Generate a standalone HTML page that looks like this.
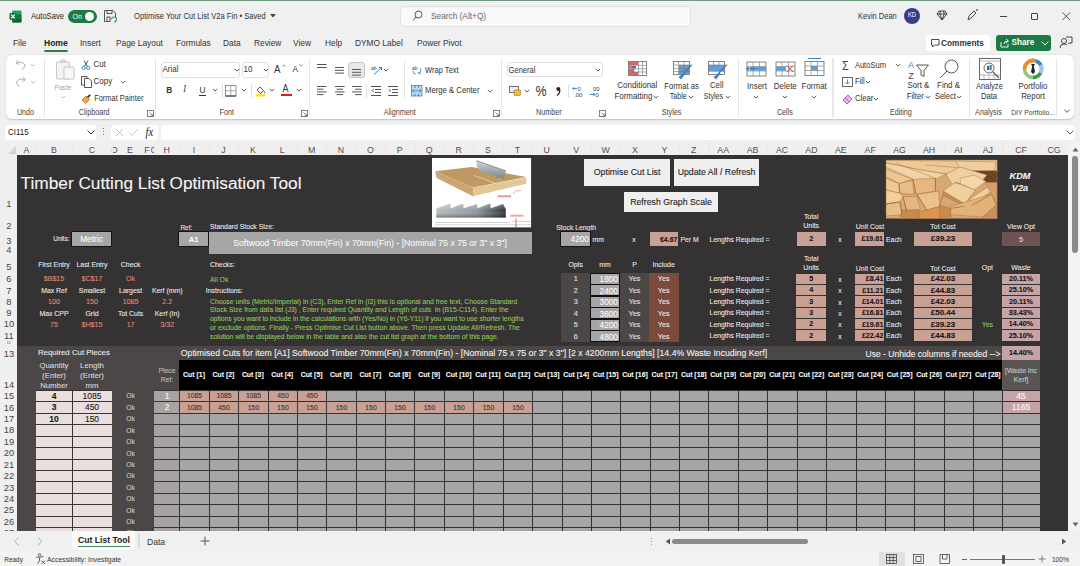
<!DOCTYPE html>
<html><head><meta charset="utf-8"><title>Timber Cutting List</title><style>
*{margin:0;padding:0;box-sizing:border-box}
html,body{width:1080px;height:566px;overflow:hidden;background:#f0f0f0;font-family:"Liberation Sans",sans-serif;color:#222}
.a{position:absolute}
.t{position:absolute;white-space:nowrap}
.s{-webkit-text-stroke:0.1px currentColor}
svg.a{overflow:visible}
</style></head><body>
<div class="a" style="left:0;top:0;width:1080px;height:1px;background:#6f9c80"></div>
<svg class="a" style="left:9px;top:10px" width="13" height="13" viewBox="0 0 13 13"><rect x="3" y="0.5" width="9.5" height="12" rx="1.2" fill="#21a366"/><rect x="3" y="4.5" width="9.5" height="4" fill="#107c41"/><rect x="3" y="8.5" width="9.5" height="4" rx="1" fill="#185c37"/><rect x="0.5" y="3" width="7" height="7" rx="1" fill="#107c41"/><path d="M2.2 4.6 L5.8 8.4 M5.8 4.6 L2.2 8.4" stroke="#fff" stroke-width="1.1"/></svg>
<div class="t" style="left:31.00px;top:9.08px;height:15.20px;line-height:15.20px;font-size:7.6px;color:#222;font-weight:normal;font-style:normal;transform:scaleY(1.12);">AutoSave</div>
<div class="a" style="left:68.00px;top:10.00px;width:29.00px;height:13.00px;background:#1c7a45;border-radius:7px"></div>
<div class="t" style="left:72.50px;top:9.57px;height:14.00px;line-height:14.00px;font-size:7px;color:#fff;font-weight:normal;font-style:normal;transform:scaleY(1.12);">On</div>
<div class="a" style="left:85px;top:12px;width:9px;height:9px;background:#fff;border-radius:50%"></div>
<svg class="a" style="left:103px;top:9px" width="14" height="14" viewBox="0 0 14 14"><path d="M1.5 1.5 H10 L12.5 4 V8 M1.5 1.5 V12.5 H7" fill="none" stroke="#555" stroke-width="1"/><rect x="4" y="1.5" width="5" height="3" fill="none" stroke="#555" stroke-width="1"/><rect x="4" y="8" width="3" height="4.5" fill="none" stroke="#555" stroke-width="1"/><path d="M8.5 10.5 a2.5 2.5 0 1 1 2.5 2.5" fill="none" stroke="#21a366" stroke-width="1.2"/></svg>
<div class="t" style="left:134.00px;top:8.78px;height:15.20px;line-height:15.20px;font-size:7.6px;color:#333;font-weight:normal;font-style:normal;transform:scaleY(1.12);">Optimise Your Cut List V2a Fin • Saved</div>
<svg class="a" style="left:270px;top:14px" width="6" height="4" viewBox="0 0 6 4"><path d="M0 0 H6 L3 3.5Z" fill="#444"/></svg>
<div class="a" style="left:400.00px;top:6.00px;width:291.00px;height:21.00px;background:#f9f9f9;border:1px solid #e2e2e2;border-radius:4px"></div>
<svg class="a" style="left:412px;top:10px" width="11" height="12" viewBox="0 0 11 12"><circle cx="6.5" cy="4.5" r="3.5" fill="none" stroke="#555" stroke-width="1"/><path d="M4 7 L1 10.5" stroke="#555" stroke-width="1"/></svg>
<div class="t" style="left:431.00px;top:8.08px;height:16.60px;line-height:16.60px;font-size:8.3px;color:#666;font-weight:normal;font-style:normal;transform:scaleY(1.12);">Search (Alt+Q)</div>
<div class="t" style="left:858.00px;top:8.57px;height:15.00px;line-height:15.00px;font-size:7.5px;color:#333;font-weight:normal;font-style:normal;transform:scaleY(1.12);">Kevin Dean</div>
<div class="a" style="left:904px;top:8px;width:16px;height:16px;background:#3c3a89;border-radius:50%"></div>
<div class="t" style="left:612.00px;width:600px;text-align:center;top:10.46px;height:11.60px;line-height:11.60px;font-size:5.8px;color:#fff;font-weight:normal;font-style:normal;transform:scaleY(1.12);">KD</div>
<svg class="a" style="left:936px;top:10px" width="12" height="11" viewBox="0 0 12 11"><path d="M3 1 H9 L11 4 L6 10 L1 4 Z M1 4 H11 M4.5 1 L3.8 4 L6 10 L8.2 4 L7.5 1" fill="none" stroke="#333" stroke-width="0.9"/></svg>
<svg class="a" style="left:966px;top:9px" width="13" height="13" viewBox="0 0 13 13"><path d="M2 11 L3 7 L8 2 L10 4 L5 9 Z" fill="none" stroke="#333" stroke-width="0.9"/><path d="M10 1 L12 1 M11 0 V2" stroke="#333" stroke-width="0.7"/></svg>
<div class="a" style="left:1000.00px;top:16.00px;width:7.00px;height:1.00px;background:#444;"></div>
<div class="a" style="left:1030.5px;top:12.5px;width:7.5px;height:7.5px;border:0.9px solid #444;border-radius:1px"></div>
<svg class="a" style="left:1062px;top:12px" width="8.5" height="8.5" viewBox="0 0 8.5 8.5"><path d="M0.5 0.5 L8 8 M8 0.5 L0.5 8" stroke="#444" stroke-width="0.9"/></svg>
<div class="t" style="left:13.00px;top:35.23px;height:16.70px;line-height:16.70px;font-size:8.35px;color:#333;font-weight:normal;font-style:normal;transform:scaleY(1.12);">File</div>
<div class="t" style="left:80.00px;top:35.23px;height:16.70px;line-height:16.70px;font-size:8.35px;color:#333;font-weight:normal;font-style:normal;transform:scaleY(1.12);">Insert</div>
<div class="t" style="left:116.00px;top:35.23px;height:16.70px;line-height:16.70px;font-size:8.35px;color:#333;font-weight:normal;font-style:normal;transform:scaleY(1.12);">Page Layout</div>
<div class="t" style="left:176.00px;top:35.23px;height:16.70px;line-height:16.70px;font-size:8.35px;color:#333;font-weight:normal;font-style:normal;transform:scaleY(1.12);">Formulas</div>
<div class="t" style="left:223.00px;top:35.23px;height:16.70px;line-height:16.70px;font-size:8.35px;color:#333;font-weight:normal;font-style:normal;transform:scaleY(1.12);">Data</div>
<div class="t" style="left:254.00px;top:35.23px;height:16.70px;line-height:16.70px;font-size:8.35px;color:#333;font-weight:normal;font-style:normal;transform:scaleY(1.12);">Review</div>
<div class="t" style="left:293.00px;top:35.23px;height:16.70px;line-height:16.70px;font-size:8.35px;color:#333;font-weight:normal;font-style:normal;transform:scaleY(1.12);">View</div>
<div class="t" style="left:325.00px;top:35.23px;height:16.70px;line-height:16.70px;font-size:8.35px;color:#333;font-weight:normal;font-style:normal;transform:scaleY(1.12);">Help</div>
<div class="t" style="left:355.00px;top:35.23px;height:16.70px;line-height:16.70px;font-size:8.35px;color:#333;font-weight:normal;font-style:normal;transform:scaleY(1.12);">DYMO Label</div>
<div class="t" style="left:417.00px;top:35.23px;height:16.70px;line-height:16.70px;font-size:8.35px;color:#333;font-weight:normal;font-style:normal;transform:scaleY(1.12);">Power Pivot</div>
<div class="t" style="left:44.00px;top:35.09px;height:17.00px;line-height:17.00px;font-size:8.5px;color:#222;font-weight:bold;font-style:normal;transform:scaleY(1.12);">Home</div>
<div class="a" style="left:44.00px;top:50.00px;width:24.00px;height:2.00px;background:#2f7d4f;border-radius:1px"></div>
<div class="a" style="left:926.00px;top:35.00px;width:64.00px;height:16.00px;background:#fff;border-radius:3px"></div>
<svg class="a" style="left:930.5px;top:39px" width="9" height="9" viewBox="0 0 9 9"><path d="M0.5 0.5 H8 V6 H3.5 L1.5 8 V6 H0.5 Z" fill="none" stroke="#333" stroke-width="0.9"/></svg>
<div class="t" style="left:941.00px;top:35.28px;height:16.60px;line-height:16.60px;font-size:8.3px;color:#333;font-weight:bold;font-style:normal;transform:scaleY(1.12);">Comments</div>
<div class="a" style="left:996.00px;top:35.00px;width:55.00px;height:16.00px;background:#1b7a44;border-radius:3px"></div>
<svg class="a" style="left:1000px;top:38px" width="10" height="10" viewBox="0 0 10 10"><path d="M1 4 V9 H8 V6 M4 6 Q4 3 8 3 M6 1 L8.5 3 L6 5" fill="none" stroke="#fff" stroke-width="0.9"/></svg>
<div class="t" style="left:1011.50px;top:35.38px;height:16.40px;line-height:16.40px;font-size:8.2px;color:#fff;font-weight:bold;font-style:normal;transform:scaleY(1.12);">Share</div>
<svg class="a" style="left:1041px;top:41px" width="8" height="5" viewBox="0 0 8 5"><path d="M0.5 0.5 L4 4 L7.5 0.5" fill="none" stroke="#fff" stroke-width="0.9"/></svg>
<svg class="a" style="left:1059px;top:36px" width="14" height="14" viewBox="0 0 14 14"><circle cx="5" cy="5" r="2.5" fill="none" stroke="#333" stroke-width="0.9"/><path d="M1 12 Q1 8 5 8 Q7 8 8 9 M7 1 H13 V7 H10 L9 8" fill="none" stroke="#333" stroke-width="0.9"/></svg>
<div class="a" style="left:6px;top:55px;width:1068px;height:64px;background:#fff;border-radius:6px;box-shadow:0 0.5px 1.5px rgba(0,0,0,.2)"></div>
<div class="a" style="left:44.00px;top:58.00px;width:1.00px;height:59.00px;background:#e6e6e6;"></div>
<div class="a" style="left:155.00px;top:58.00px;width:1.00px;height:59.00px;background:#e6e6e6;"></div>
<div class="a" style="left:309.00px;top:58.00px;width:1.00px;height:59.00px;background:#e6e6e6;"></div>
<div class="a" style="left:404.00px;top:60.00px;width:1.00px;height:40.00px;background:#e6e6e6;"></div>
<div class="a" style="left:501.00px;top:58.00px;width:1.00px;height:59.00px;background:#e6e6e6;"></div>
<div class="a" style="left:608.00px;top:58.00px;width:0.00px;height:59.00px;background:#e6e6e6;"></div>
<div class="a" style="left:738.00px;top:58.00px;width:1.00px;height:59.00px;background:#e6e6e6;"></div>
<div class="a" style="left:832.00px;top:58.00px;width:2.00px;height:59.00px;background:#e6e6e6;"></div>
<div class="a" style="left:969.00px;top:58.00px;width:1.00px;height:59.00px;background:#e6e6e6;"></div>
<div class="a" style="left:1010.00px;top:58.00px;width:0.00px;height:59.00px;background:#e6e6e6;"></div>
<div class="a" style="left:1056.00px;top:58.00px;width:1.00px;height:59.00px;background:#e6e6e6;"></div>
<div class="a" style="left:222.00px;top:84.00px;width:1.00px;height:14.00px;background:#e0e0e0;"></div>
<div class="a" style="left:251.00px;top:84.00px;width:1.00px;height:14.00px;background:#e0e0e0;"></div>
<div class="a" style="left:366.00px;top:84.00px;width:1.00px;height:14.00px;background:#e0e0e0;"></div>
<div class="a" style="left:568.00px;top:84.00px;width:1.00px;height:14.00px;background:#e0e0e0;"></div>
<div class="t" style="left:-274.60px;width:600px;text-align:center;top:106.17px;height:14.20px;line-height:14.20px;font-size:7.1px;color:#444;font-weight:normal;font-style:normal;transform:scaleY(1.15);">Undo</div>
<div class="t" style="left:-205.80px;width:600px;text-align:center;top:106.07px;height:14.40px;line-height:14.40px;font-size:7.2px;color:#444;font-weight:normal;font-style:normal;transform:scaleY(1.15);">Clipboard</div>
<div class="t" style="left:-73.20px;width:600px;text-align:center;top:106.07px;height:14.40px;line-height:14.40px;font-size:7.2px;color:#444;font-weight:normal;font-style:normal;transform:scaleY(1.15);">Font</div>
<div class="t" style="left:99.70px;width:600px;text-align:center;top:106.07px;height:14.40px;line-height:14.40px;font-size:7.2px;color:#444;font-weight:normal;font-style:normal;transform:scaleY(1.15);">Alignment</div>
<div class="t" style="left:248.90px;width:600px;text-align:center;top:106.07px;height:14.40px;line-height:14.40px;font-size:7.2px;color:#444;font-weight:normal;font-style:normal;transform:scaleY(1.15);">Number</div>
<div class="t" style="left:371.60px;width:600px;text-align:center;top:106.07px;height:14.40px;line-height:14.40px;font-size:7.2px;color:#444;font-weight:normal;font-style:normal;transform:scaleY(1.15);">Styles</div>
<div class="t" style="left:484.90px;width:600px;text-align:center;top:106.07px;height:14.40px;line-height:14.40px;font-size:7.2px;color:#444;font-weight:normal;font-style:normal;transform:scaleY(1.15);">Cells</div>
<div class="t" style="left:600.90px;width:600px;text-align:center;top:106.07px;height:14.40px;line-height:14.40px;font-size:7.2px;color:#444;font-weight:normal;font-style:normal;transform:scaleY(1.15);">Editing</div>
<div class="t" style="left:688.50px;width:600px;text-align:center;top:106.07px;height:14.40px;line-height:14.40px;font-size:7.2px;color:#444;font-weight:normal;font-style:normal;transform:scaleY(1.15);">Analysis</div>
<div class="t" style="left:733.00px;width:600px;text-align:center;top:106.47px;height:13.60px;line-height:13.60px;font-size:6.8px;color:#444;font-weight:normal;font-style:normal;transform:scaleY(1.15);">DIY Portfolio...</div>
<svg class="a" style="left:15px;top:59px" width="12" height="11" viewBox="0 0 12 11"><path d="M3 1 L1 4 L4 5.5" fill="none" stroke="#b0b0b0" stroke-width="1"/><path d="M1.5 4 Q6 2 9 4.5 Q11.5 7.5 7 10.5" fill="none" stroke="#b0b0b0" stroke-width="1"/></svg>
<svg class="a" style="left:30px;top:63px" width="6" height="4" viewBox="0 0 6 4"><path d="M0.80 0.90 L3 3.10 L5.20 0.90" fill="none" stroke="#bbb" stroke-width="0.9"/></svg>
<svg class="a" style="left:15px;top:76px" width="12" height="11" viewBox="0 0 12 11"><path d="M8 1 L10.5 4 L7 5.5" fill="none" stroke="#b0b0b0" stroke-width="1"/><path d="M10 4 Q5 2 2.5 4.5 Q0 7.5 4.5 10.5" fill="none" stroke="#b0b0b0" stroke-width="1"/></svg>
<svg class="a" style="left:30px;top:79.5px" width="6" height="4" viewBox="0 0 6 4"><path d="M0.80 0.90 L3 3.10 L5.20 0.90" fill="none" stroke="#bbb" stroke-width="0.9"/></svg>
<svg class="a" style="left:56px;top:59px" width="19" height="21" viewBox="0 0 19 21"><rect x="0.5" y="3" width="13" height="17" rx="1" fill="#f3f3f3" stroke="#c8c8c8" stroke-width="1"/><path d="M4 3 Q4 0.8 7 0.8 Q10 0.8 10 3 Z" fill="#e8e8e8" stroke="#c8c8c8" stroke-width="0.9"/><rect x="8" y="8" width="10" height="12" rx="0.8" fill="#f7f7f7" stroke="#c4c4c4" stroke-width="1"/></svg>
<div class="t" style="left:-237.00px;width:600px;text-align:center;top:81.17px;height:13.40px;line-height:13.40px;font-size:6.7px;color:#aaa;font-weight:normal;font-style:normal;transform:scaleY(1.15);">Paste</div>
<svg class="a" style="left:60px;top:94.7px" width="6" height="4" viewBox="0 0 6 4"><path d="M0.80 0.90 L3 3.10 L5.20 0.90" fill="none" stroke="#bbb" stroke-width="0.9"/></svg>
<svg class="a" style="left:81px;top:60px" width="10" height="10" viewBox="0 0 10 10"><path d="M3 0.5 L6.5 6.5 M7 0.5 L3.5 6.5" stroke="#444" stroke-width="0.9"/><circle cx="2.7" cy="7.8" r="1.6" fill="none" stroke="#2e86c8" stroke-width="1"/><circle cx="7.3" cy="7.8" r="1.6" fill="none" stroke="#2e86c8" stroke-width="1"/></svg>
<div class="t" style="left:93.50px;top:57.43px;height:15.70px;line-height:15.70px;font-size:7.85px;color:#333;font-weight:normal;font-style:normal;transform:scaleY(1.15);">Cut</div>
<svg class="a" style="left:80.5px;top:75.5px" width="11" height="12" viewBox="0 0 11 12"><path d="M6 2.5 V0.5 H0.5 V9 H3" fill="none" stroke="#444" stroke-width="0.9"/><path d="M3.5 2.5 H8 L10.5 5 V11.5 H3.5 Z" fill="#fff" stroke="#444" stroke-width="0.9"/></svg>
<div class="t" style="left:93.50px;top:74.48px;height:16.00px;line-height:16.00px;font-size:8px;color:#333;font-weight:normal;font-style:normal;transform:scaleY(1.15);">Copy</div>
<svg class="a" style="left:119.7px;top:80.4px" width="6" height="4" viewBox="0 0 6 4"><path d="M0.80 0.90 L3 3.10 L5.20 0.90" fill="none" stroke="#555" stroke-width="0.9"/></svg>
<svg class="a" style="left:81px;top:93.5px" width="10" height="10" viewBox="0 0 10 10"><path d="M1 6 L5 2 L8.5 5.5 L4.5 9.5 Z" fill="#f2a53a" stroke="#b86e12" stroke-width="0.7"/><path d="M6 3 L8.5 0.5 L9.5 1.5 L7 4" fill="#444" stroke="#444" stroke-width="0.7"/></svg>
<div class="t" style="left:94.20px;top:91.82px;height:14.90px;line-height:14.90px;font-size:7.45px;color:#333;font-weight:normal;font-style:normal;transform:scaleY(1.15);">Format Painter</div>
<svg class="a" style="left:146.7px;top:110px" width="7" height="7" viewBox="0 0 7 7"><rect x="0.5" y="0.5" width="6" height="6" fill="none" stroke="#666" stroke-width="0.8"/><path d="M2.5 2.5 L6 6 M6 3.5 V6 H3.5" fill="none" stroke="#666" stroke-width="0.8"/></svg>
<div class="a" style="left:161.00px;top:62.00px;width:79.00px;height:16.00px;background:#fff;border:1px solid #e1e1e1;border-radius:3px"></div>
<div class="t" style="left:162.50px;top:61.98px;height:16.00px;line-height:16.00px;font-size:8px;color:#333;font-weight:normal;font-style:normal;transform:scaleY(1.15);">Arial</div>
<svg class="a" style="left:233.5px;top:67.8px" width="6" height="4" viewBox="0 0 6 4"><path d="M0.80 0.90 L3 3.10 L5.20 0.90" fill="none" stroke="#444" stroke-width="0.9"/></svg>
<div class="a" style="left:242.00px;top:62.00px;width:27.00px;height:16.00px;background:#fff;border:1px solid #e1e1e1;border-radius:3px"></div>
<div class="t" style="left:243.50px;top:61.98px;height:16.00px;line-height:16.00px;font-size:8px;color:#333;font-weight:normal;font-style:normal;transform:scaleY(1.15);">10</div>
<svg class="a" style="left:262.8px;top:67.8px" width="6" height="4" viewBox="0 0 6 4"><path d="M0.80 0.90 L3 3.10 L5.20 0.90" fill="none" stroke="#444" stroke-width="0.9"/></svg>
<div class="t" style="left:274.00px;top:59.60px;height:19.60px;line-height:19.60px;font-size:9.8px;color:#333;font-weight:normal;font-style:normal;transform:scaleY(1.15);">A</div>
<svg class="a" style="left:282px;top:64px" width="4" height="3" viewBox="0 0 4 3"><path d="M0.5 2.5 L2 0.8 L3.5 2.5" fill="none" stroke="#2e86c8" stroke-width="0.8"/></svg>
<div class="t" style="left:292.50px;top:61.88px;height:16.40px;line-height:16.40px;font-size:8.2px;color:#333;font-weight:normal;font-style:normal;transform:scaleY(1.15);">A</div>
<svg class="a" style="left:299px;top:64px" width="4" height="3" viewBox="0 0 4 3"><path d="M0.5 0.5 L2 2.2 L3.5 0.5" fill="none" stroke="#2e86c8" stroke-width="0.8"/></svg>
<div class="t" style="left:166.20px;top:82.18px;height:16.60px;line-height:16.60px;font-size:8.3px;color:#333;font-weight:bold;font-style:normal;transform:scaleY(1.15);">B</div>
<div class="t" style="left:183.20px;top:82.18px;height:16.60px;line-height:16.60px;font-size:8.3px;color:#333;font-weight:normal;font-style:italic;transform:scaleY(1.15);font-family:'Liberation Serif',serif">I</div>
<div class="t" style="left:199.50px;top:81.88px;height:16.60px;line-height:16.60px;font-size:8.3px;color:#333;font-weight:normal;font-style:normal;transform:scaleY(1.15);">U</div>
<div class="a" style="left:199.00px;top:95.00px;width:7.00px;height:1.00px;background:#333;"></div>
<svg class="a" style="left:212px;top:88.4px" width="6" height="4" viewBox="0 0 6 4"><path d="M0.80 0.90 L3 3.10 L5.20 0.90" fill="none" stroke="#444" stroke-width="0.9"/></svg>
<svg class="a" style="left:225px;top:85px" width="12" height="12" viewBox="0 0 12 12"><rect x="0.5" y="0.5" width="10.5" height="10.5" fill="none" stroke="#888" stroke-width="0.9"/><path d="M5.75 0.5 V11 M0.5 5.75 H11" stroke="#888" stroke-width="0.7"/><path d="M0.5 11 H11" stroke="#333" stroke-width="1"/></svg>
<svg class="a" style="left:240.5px;top:88.4px" width="6" height="4" viewBox="0 0 6 4"><path d="M0.80 0.90 L3 3.10 L5.20 0.90" fill="none" stroke="#444" stroke-width="0.9"/></svg>
<svg class="a" style="left:254.5px;top:84.5px" width="11" height="12" viewBox="0 0 11 12"><path d="M2 5 L5 2 L8.5 5.5 L5.5 8.5 Z" fill="none" stroke="#444" stroke-width="0.9"/><path d="M9 6 Q10.5 8 9.5 8.5" fill="none" stroke="#2e86c8" stroke-width="1"/><rect x="0.5" y="9.3" width="10" height="2.2" fill="#ffe500"/></svg>
<svg class="a" style="left:269.3px;top:88.4px" width="6" height="4" viewBox="0 0 6 4"><path d="M0.80 0.90 L3 3.10 L5.20 0.90" fill="none" stroke="#444" stroke-width="0.9"/></svg>
<div class="t" style="left:282.60px;top:79.79px;height:18.00px;line-height:18.00px;font-size:9px;color:#333;font-weight:normal;font-style:normal;transform:scaleY(1.15);">A</div>
<div class="a" style="left:281.00px;top:94.00px;width:11.00px;height:2.00px;background:#e41b1b;"></div>
<svg class="a" style="left:295.5px;top:88.4px" width="6" height="4" viewBox="0 0 6 4"><path d="M0.80 0.90 L3 3.10 L5.20 0.90" fill="none" stroke="#444" stroke-width="0.9"/></svg>
<svg class="a" style="left:300.5px;top:110px" width="7" height="7" viewBox="0 0 7 7"><rect x="0.5" y="0.5" width="6" height="6" fill="none" stroke="#666" stroke-width="0.8"/><path d="M2.5 2.5 L6 6 M6 3.5 V6 H3.5" fill="none" stroke="#666" stroke-width="0.8"/></svg>
<svg class="a" style="left:317.4px;top:64px" width="11" height="7" viewBox="0 0 11 7"><rect x="0" y="0" width="9.6" height="1" fill="#555"/><rect x="0" y="3" width="9.6" height="1" fill="#555"/></svg>
<svg class="a" style="left:335px;top:66.5px" width="11" height="9.399999999999999" viewBox="0 0 11 9.399999999999999"><rect x="0" y="0.0" width="9" height="1" fill="#555"/><rect x="0" y="2.8" width="9" height="1" fill="#555"/><rect x="0" y="5.6" width="9" height="1" fill="#555"/></svg>
<div class="a" style="left:348.00px;top:62.00px;width:17.00px;height:16.00px;background:#e9e9e9;border:1px solid #c4c4c4;border-radius:3px"></div>
<svg class="a" style="left:352px;top:69px" width="11" height="9.399999999999999" viewBox="0 0 11 9.399999999999999"><rect x="0" y="0.0" width="9" height="1" fill="#555"/><rect x="0" y="2.8" width="9" height="1" fill="#555"/><rect x="0" y="5.6" width="9" height="1" fill="#555"/></svg>
<svg class="a" style="left:370.5px;top:64.5px" width="12" height="10" viewBox="0 0 12 10"><text x="0" y="5" font-size="5" fill="#444" font-family="Liberation Sans">ab</text><path d="M3 9.5 L10.5 2.5 M8 2.5 H10.5 V5" fill="none" stroke="#2e86c8" stroke-width="1"/></svg>
<svg class="a" style="left:383.4px;top:68px" width="6" height="4" viewBox="0 0 6 4"><path d="M0.80 0.90 L3 3.10 L5.20 0.90" fill="none" stroke="#444" stroke-width="0.9"/></svg>
<svg class="a" style="left:317.4px;top:86px" width="11" height="11.8" viewBox="0 0 11 11.8"><rect x="0" y="0.0" width="9.6" height="1" fill="#555"/><rect x="0" y="2.7" width="6.5" height="1" fill="#555"/><rect x="0" y="5.4" width="9.6" height="1" fill="#555"/><rect x="0" y="8.100000000000001" width="6.5" height="1" fill="#555"/></svg>
<svg class="a" style="left:335px;top:86px" width="11" height="11.8" viewBox="0 0 11 11.8"><rect x="0" y="0.0" width="9.6" height="1" fill="#555"/><rect x="1.5" y="2.7" width="6.5" height="1" fill="#555"/><rect x="0" y="5.4" width="9.6" height="1" fill="#555"/><rect x="1.5" y="8.100000000000001" width="6.5" height="1" fill="#555"/></svg>
<svg class="a" style="left:352px;top:86px" width="11" height="11.8" viewBox="0 0 11 11.8"><rect x="0" y="0.0" width="9.6" height="1" fill="#555"/><rect x="3.1" y="2.7" width="6.5" height="1" fill="#555"/><rect x="0" y="5.4" width="9.6" height="1" fill="#555"/><rect x="3.1" y="8.100000000000001" width="6.5" height="1" fill="#555"/></svg>
<svg class="a" style="left:370.6px;top:86px" width="11" height="10" viewBox="0 0 11 10"><rect x="0" y="0" width="10" height="1" fill="#555"/><rect x="4" y="3" width="6" height="1" fill="#555"/><rect x="4" y="6" width="6" height="1" fill="#555"/><rect x="0" y="9" width="10" height="1" fill="#555"/><path d="M3 3 L0.5 4.5 L3 6" fill="none" stroke="#2e86c8" stroke-width="0.9"/></svg>
<svg class="a" style="left:387.5px;top:86px" width="11" height="10" viewBox="0 0 11 10"><rect x="0" y="0" width="10" height="1" fill="#555"/><rect x="4" y="3" width="6" height="1" fill="#555"/><rect x="4" y="6" width="6" height="1" fill="#555"/><rect x="0" y="9" width="10" height="1" fill="#555"/><path d="M0.5 3 L3 4.5 L0.5 6" fill="none" stroke="#2e86c8" stroke-width="0.9"/></svg>
<svg class="a" style="left:412.4px;top:65px" width="10" height="10" viewBox="0 0 10 10"><text x="0" y="4.5" font-size="4.8" fill="#444" font-family="Liberation Sans">ab</text><path d="M1 6 Q1 9 4 9 M8.5 3 Q9.5 6 7 8.5 M6 7 L7 9 L9 8" fill="none" stroke="#2e86c8" stroke-width="0.8"/></svg>
<div class="t" style="left:425.00px;top:62.53px;height:15.10px;line-height:15.10px;font-size:7.55px;color:#333;font-weight:normal;font-style:normal;transform:scaleY(1.15);">Wrap Text</div>
<svg class="a" style="left:411px;top:85px" width="11.5" height="11.5" viewBox="0 0 11.5 11.5"><rect x="0.5" y="0.5" width="10.5" height="10.5" fill="#b9dcf2" stroke="#777" stroke-width="0.8"/><path d="M4 0.5 V3 M7.5 0.5 V3 M4 8.5 V11 M7.5 8.5 V11 M1.5 5.75 H10 M3 4 L1.5 5.75 L3 7.5 M8.5 4 L10 5.75 L8.5 7.5" fill="none" stroke="#2e6da4" stroke-width="0.7"/></svg>
<div class="t" style="left:425.00px;top:83.36px;height:15.44px;line-height:15.44px;font-size:7.72px;color:#333;font-weight:normal;font-style:normal;transform:scaleY(1.15);">Merge &amp; Center</div>
<svg class="a" style="left:487px;top:89px" width="6" height="4" viewBox="0 0 6 4"><path d="M0.80 0.90 L3 3.10 L5.20 0.90" fill="none" stroke="#444" stroke-width="0.9"/></svg>
<svg class="a" style="left:492.8px;top:110px" width="7" height="7" viewBox="0 0 7 7"><rect x="0.5" y="0.5" width="6" height="6" fill="none" stroke="#666" stroke-width="0.8"/><path d="M2.5 2.5 L6 6 M6 3.5 V6 H3.5" fill="none" stroke="#666" stroke-width="0.8"/></svg>
<div class="a" style="left:507.00px;top:62.00px;width:96.00px;height:15.00px;background:#fff;border:1px solid #e1e1e1;border-radius:3px"></div>
<div class="t" style="left:508.50px;top:62.58px;height:15.20px;line-height:15.20px;font-size:7.6px;color:#333;font-weight:normal;font-style:normal;transform:scaleY(1.15);">General</div>
<svg class="a" style="left:594.8px;top:68.1px" width="6" height="4" viewBox="0 0 6 4"><path d="M0.80 0.90 L3 3.10 L5.20 0.90" fill="none" stroke="#444" stroke-width="0.9"/></svg>
<svg class="a" style="left:508.5px;top:85.5px" width="12" height="10" viewBox="0 0 12 10"><rect x="0.5" y="0.5" width="9" height="6" fill="#eee" stroke="#555" stroke-width="0.8"/><rect x="5" y="4" width="6.5" height="5.5" rx="1" fill="#f2b84b" stroke="#a36a10" stroke-width="0.6"/></svg>
<svg class="a" style="left:523.7px;top:88.6px" width="6" height="4" viewBox="0 0 6 4"><path d="M0.80 0.90 L3 3.10 L5.20 0.90" fill="none" stroke="#444" stroke-width="0.9"/></svg>
<div class="t" style="left:535.50px;top:78.62px;height:25.00px;line-height:25.00px;font-size:12.5px;color:#333;font-weight:normal;font-style:normal;transform:scaleY(1.15);">%</div>
<svg class="a" style="left:555.5px;top:86px" width="5" height="10" viewBox="0 0 5 10"><circle cx="2.3" cy="3" r="2" fill="#222"/><path d="M3.8 3.5 Q4 7.5 1 9.5" fill="none" stroke="#222" stroke-width="1.3"/></svg>
<svg class="a" style="left:572px;top:84.5px" width="12" height="12" viewBox="0 0 12 12"><text x="5.5" y="5.5" font-size="6" fill="#444" font-family="Liberation Sans">0</text><text x="2" y="11.5" font-size="6" fill="#444" font-family="Liberation Sans">.00</text><path d="M5 3.5 H0.8 M2.3 2 L0.8 3.5 L2.3 5" fill="none" stroke="#2e86c8" stroke-width="0.9"/></svg>
<svg class="a" style="left:589px;top:84.5px" width="12" height="12" viewBox="0 0 12 12"><text x="4" y="5.5" font-size="6" fill="#444" font-family="Liberation Sans">00</text><text x="6.5" y="11.5" font-size="6" fill="#444" font-family="Liberation Sans">0</text><path d="M0.5 9.5 H6 M4.5 8 L6 9.5 L4.5 11" fill="none" stroke="#2e86c8" stroke-width="0.9"/></svg>
<svg class="a" style="left:598.8px;top:110px" width="7" height="7" viewBox="0 0 7 7"><rect x="0.5" y="0.5" width="6" height="6" fill="none" stroke="#666" stroke-width="0.8"/><path d="M2.5 2.5 L6 6 M6 3.5 V6 H3.5" fill="none" stroke="#666" stroke-width="0.8"/></svg>
<svg class="a" style="left:628.4px;top:61.2px" width="19" height="15" viewBox="0 0 19 15"><rect x="0.5" y="0.5" width="18" height="14" fill="#fff" stroke="#666" stroke-width="0.8"/><rect x="1" y="1" width="9" height="3" fill="#e86464"/><rect x="1" y="8" width="5" height="3" fill="#e86464"/><rect x="1" y="11" width="9" height="3" fill="#e86464"/><rect x="1" y="4.5" width="3" height="3" fill="#e86464"/><rect x="4" y="5" width="4" height="2.5" fill="#3d7cc9"/><path d="M0.5 4.3 H18.5 M0.5 7.8 H18.5 M0.5 11 H18.5 M6 0.5 V14.5 M10.5 0.5 V14.5 M14.5 0.5 V14.5" stroke="#777" stroke-width="0.6"/></svg>
<div class="t" style="left:337.30px;width:600px;text-align:center;top:78.18px;height:16.00px;line-height:16.00px;font-size:8px;color:#333;font-weight:normal;font-style:normal;transform:scaleY(1.15);">Conditional</div>
<div class="t" style="left:614.40px;top:88.93px;height:15.90px;line-height:15.90px;font-size:7.95px;color:#333;font-weight:normal;font-style:normal;transform:scaleY(1.15);">Formatting</div>
<svg class="a" style="left:652.5px;top:95px" width="6" height="4" viewBox="0 0 6 4"><path d="M0.80 0.90 L3 3.10 L5.20 0.90" fill="none" stroke="#444" stroke-width="0.9"/></svg>
<svg class="a" style="left:672.9px;top:61.2px" width="20" height="18" viewBox="0 0 20 18"><rect x="0.5" y="0.5" width="16" height="13" fill="#fff" stroke="#666" stroke-width="0.8"/><rect x="6" y="4" width="10" height="9" fill="#5aa0e0"/><path d="M0.5 4 H16.5 M0.5 7.5 H16.5 M0.5 10.5 H16.5 M5.5 0.5 V13.5 M11 0.5 V13.5" stroke="#777" stroke-width="0.6"/><path d="M18.5 4 L10 13 M12 12 L8 17.5 L6.5 16 Z" fill="#3d7cc9" stroke="#3d7cc9" stroke-width="1.2"/><path d="M19 3.5 L13 10" stroke="#666" stroke-width="0.9"/></svg>
<div class="t" style="left:381.60px;width:600px;text-align:center;top:78.51px;height:15.34px;line-height:15.34px;font-size:7.67px;color:#333;font-weight:normal;font-style:normal;transform:scaleY(1.15);">Format as</div>
<div class="t" style="left:669.80px;top:89.77px;height:14.20px;line-height:14.20px;font-size:7.1px;color:#333;font-weight:normal;font-style:normal;transform:scaleY(1.15);">Table</div>
<svg class="a" style="left:688px;top:95px" width="6" height="4" viewBox="0 0 6 4"><path d="M0.80 0.90 L3 3.10 L5.20 0.90" fill="none" stroke="#444" stroke-width="0.9"/></svg>
<svg class="a" style="left:707.8px;top:61.2px" width="20" height="18" viewBox="0 0 20 18"><rect x="0.5" y="0.5" width="16" height="13" fill="#fff" stroke="#666" stroke-width="0.8"/><rect x="1" y="4" width="15" height="6" fill="#5aa0e0"/><path d="M0.5 4 H16.5 M0.5 10.5 H16.5 M5.5 0.5 V4 M11 0.5 V4" stroke="#777" stroke-width="0.6"/><path d="M18.5 4 L10 13 M12 12 L8 17.5 L6.5 16 Z" fill="#3d7cc9" stroke="#3d7cc9" stroke-width="1.2"/><path d="M19 3.5 L13 10" stroke="#666" stroke-width="0.9"/></svg>
<div class="t" style="left:416.70px;width:600px;text-align:center;top:78.38px;height:15.60px;line-height:15.60px;font-size:7.8px;color:#333;font-weight:normal;font-style:normal;transform:scaleY(1.15);">Cell</div>
<div class="t" style="left:703.80px;top:89.77px;height:14.20px;line-height:14.20px;font-size:7.1px;color:#333;font-weight:normal;font-style:normal;transform:scaleY(1.15);">Styles</div>
<svg class="a" style="left:724.5px;top:95px" width="6" height="4" viewBox="0 0 6 4"><path d="M0.80 0.90 L3 3.10 L5.20 0.90" fill="none" stroke="#444" stroke-width="0.9"/></svg>
<svg class="a" style="left:746px;top:60.5px" width="22" height="16" viewBox="0 0 22 16"><rect x="1" y="1" width="19" height="14" fill="#fff" stroke="#666" stroke-width="0.8"/><path d="M1 5.5 H20 M1 10 H20 M7 1 V15 M13.5 1 V15" stroke="#888" stroke-width="0.7"/><rect x="4" y="5.8" width="16" height="4" fill="#5aa0e0"/><path d="M0.5 7.8 H9 M3 5.8 L0.5 7.8 L3 9.8" fill="none" stroke="#2e6da4" stroke-width="1"/></svg>
<div class="t" style="left:457.00px;width:600px;text-align:center;top:79.33px;height:15.90px;line-height:15.90px;font-size:7.95px;color:#333;font-weight:normal;font-style:normal;transform:scaleY(1.15);">Insert</div>
<svg class="a" style="left:753.4px;top:95px" width="6" height="4" viewBox="0 0 6 4"><path d="M0.80 0.90 L3 3.10 L5.20 0.90" fill="none" stroke="#444" stroke-width="0.9"/></svg>
<svg class="a" style="left:775px;top:60.5px" width="22" height="16" viewBox="0 0 22 16"><rect x="1" y="1" width="19" height="14" fill="#fff" stroke="#666" stroke-width="0.8"/><path d="M1 5.5 H20 M1 10 H20 M7 1 V15 M13.5 1 V15" stroke="#888" stroke-width="0.7"/><rect x="1" y="5.8" width="10" height="4" fill="#5aa0e0"/><path d="M12 4.5 L18 11 M18 4.5 L12 11" stroke="#e03c3c" stroke-width="1"/></svg>
<div class="t" style="left:485.30px;width:600px;text-align:center;top:79.33px;height:15.90px;line-height:15.90px;font-size:7.95px;color:#333;font-weight:normal;font-style:normal;transform:scaleY(1.15);">Delete</div>
<svg class="a" style="left:782px;top:95px" width="6" height="4" viewBox="0 0 6 4"><path d="M0.80 0.90 L3 3.10 L5.20 0.90" fill="none" stroke="#444" stroke-width="0.9"/></svg>
<svg class="a" style="left:804px;top:57.5px" width="21" height="19" viewBox="0 0 21 19"><rect x="4" y="0" width="13" height="1" fill="#2e86c8"/><rect x="1" y="3.5" width="19" height="14" fill="#fff" stroke="#666" stroke-width="0.8"/><rect x="7" y="8" width="6.5" height="4.5" fill="#5aa0e0"/><path d="M1 8 H20 M1 12.5 H20 M7 3.5 V17.5 M13.5 3.5 V17.5" stroke="#888" stroke-width="0.7"/></svg>
<div class="t" style="left:514.20px;width:600px;text-align:center;top:78.73px;height:15.90px;line-height:15.90px;font-size:7.95px;color:#333;font-weight:normal;font-style:normal;transform:scaleY(1.15);">Format</div>
<svg class="a" style="left:810.8px;top:95px" width="6" height="4" viewBox="0 0 6 4"><path d="M0.80 0.90 L3 3.10 L5.20 0.90" fill="none" stroke="#444" stroke-width="0.9"/></svg>
<div class="t" style="left:842.00px;top:54.11px;height:22.00px;line-height:22.00px;font-size:11px;color:#444;font-weight:normal;font-style:normal;transform:scaleY(1.15);">Σ</div>
<div class="t" style="left:854.90px;top:57.73px;height:15.10px;line-height:15.10px;font-size:7.55px;color:#333;font-weight:normal;font-style:normal;transform:scaleY(1.15);">AutoSum</div>
<svg class="a" style="left:894.6px;top:63px" width="6" height="4" viewBox="0 0 6 4"><path d="M0.80 0.90 L3 3.10 L5.20 0.90" fill="none" stroke="#444" stroke-width="0.9"/></svg>
<svg class="a" style="left:841.5px;top:77px" width="11" height="10" viewBox="0 0 11 10"><rect x="0.5" y="0.5" width="10" height="9" fill="#fff" stroke="#555" stroke-width="0.9"/><path d="M5.5 2.5 V7 M3.5 5 L5.5 7 L7.5 5" fill="none" stroke="#2e86c8" stroke-width="0.9"/></svg>
<div class="t" style="left:854.90px;top:74.18px;height:15.40px;line-height:15.40px;font-size:7.7px;color:#333;font-weight:normal;font-style:normal;transform:scaleY(1.15);">Fill</div>
<svg class="a" style="left:865px;top:80px" width="6" height="4" viewBox="0 0 6 4"><path d="M0.80 0.90 L3 3.10 L5.20 0.90" fill="none" stroke="#444" stroke-width="0.9"/></svg>
<svg class="a" style="left:841.5px;top:93.5px" width="11" height="10" viewBox="0 0 11 10"><path d="M1 6 L6 1 L10 5 L5 10 Z" fill="#e6b7ee" stroke="#b84fc4" stroke-width="0.9"/><path d="M3.2 3.8 L7.5 8" stroke="#b84fc4" stroke-width="0.9"/></svg>
<div class="t" style="left:854.90px;top:91.38px;height:15.40px;line-height:15.40px;font-size:7.7px;color:#333;font-weight:normal;font-style:normal;transform:scaleY(1.15);">Clear</div>
<svg class="a" style="left:873px;top:97px" width="6" height="4" viewBox="0 0 6 4"><path d="M0.80 0.90 L3 3.10 L5.20 0.90" fill="none" stroke="#444" stroke-width="0.9"/></svg>
<svg class="a" style="left:907.5px;top:59.5px" width="22" height="19" viewBox="0 0 22 19"><text x="0" y="8" font-size="9" fill="#2e86c8" font-family="Liberation Sans">A</text><text x="0.3" y="18.5" font-size="9" fill="#444" font-family="Liberation Sans">Z</text><path d="M8.5 5 H20.5 L16 10.5 V16.5 L13 15 V10.5 Z" fill="none" stroke="#444" stroke-width="0.9"/></svg>
<div class="t" style="left:618.40px;width:600px;text-align:center;top:78.28px;height:15.80px;line-height:15.80px;font-size:7.9px;color:#333;font-weight:normal;font-style:normal;transform:scaleY(1.15);">Sort &amp;</div>
<div class="t" style="left:906.70px;top:89.18px;height:15.40px;line-height:15.40px;font-size:7.7px;color:#333;font-weight:normal;font-style:normal;transform:scaleY(1.15);">Filter</div>
<svg class="a" style="left:924.5px;top:95px" width="6" height="4" viewBox="0 0 6 4"><path d="M0.80 0.90 L3 3.10 L5.20 0.90" fill="none" stroke="#444" stroke-width="0.9"/></svg>
<svg class="a" style="left:938.5px;top:59px" width="20" height="20" viewBox="0 0 20 20"><circle cx="12.5" cy="7.5" r="6.5" fill="none" stroke="#444" stroke-width="0.9"/><path d="M8 12 L1 19" stroke="#444" stroke-width="0.9"/></svg>
<div class="t" style="left:648.50px;width:600px;text-align:center;top:78.28px;height:15.80px;line-height:15.80px;font-size:7.9px;color:#333;font-weight:normal;font-style:normal;transform:scaleY(1.15);">Find &amp;</div>
<div class="t" style="left:934.90px;top:89.33px;height:15.10px;line-height:15.10px;font-size:7.55px;color:#333;font-weight:normal;font-style:normal;transform:scaleY(1.15);">Select</div>
<svg class="a" style="left:956.3px;top:95px" width="6" height="4" viewBox="0 0 6 4"><path d="M0.80 0.90 L3 3.10 L5.20 0.90" fill="none" stroke="#444" stroke-width="0.9"/></svg>
<svg class="a" style="left:978.5px;top:58px" width="22" height="22" viewBox="0 0 22 22"><rect x="0.5" y="0.5" width="21" height="21" fill="#fff" stroke="#555" stroke-width="0.9"/><path d="M0.5 3 H21.5 M0.5 17 H21.5 M5 17 V21.5 M10 17 V21.5 M15 17 V21.5" stroke="#888" stroke-width="0.6"/><circle cx="10" cy="10" r="5" fill="#fff" stroke="#555" stroke-width="0.9"/><rect x="8" y="8" width="2" height="4" fill="#555"/><rect x="10.5" y="7" width="2.2" height="5" fill="#2e86c8"/><path d="M13.5 13.5 L20 20" stroke="#555" stroke-width="1.1"/></svg>
<div class="t" style="left:689.40px;width:600px;text-align:center;top:79.08px;height:15.20px;line-height:15.20px;font-size:7.6px;color:#333;font-weight:normal;font-style:normal;transform:scaleY(1.15);">Analyze</div>
<div class="t" style="left:689.00px;width:600px;text-align:center;top:89.48px;height:15.40px;line-height:15.40px;font-size:7.7px;color:#333;font-weight:normal;font-style:normal;transform:scaleY(1.15);">Data</div>
<svg class="a" style="left:1022px;top:58px" width="22" height="22" viewBox="0 0 22 22"><circle cx="11" cy="11" r="8.5" fill="none" stroke="#93c47d" stroke-width="3.6"/><path d="M2.5 11 A8.5 8.5 0 0 1 14 3" fill="none" stroke="#f08a24" stroke-width="3.6"/><path d="M14 3 A8.5 8.5 0 0 1 19 7" fill="none" stroke="#3d85c6" stroke-width="3.6"/><path d="M19 7 A8.5 8.5 0 0 1 18.5 15" fill="none" stroke="#a4c2f4" stroke-width="3.6"/><path d="M18.5 15 A8.5 8.5 0 0 1 11 19.5" fill="none" stroke="#38a04a" stroke-width="3.6"/><path d="M9 6 H13 L11.8 8 L13 14 L11 16 L9 14 L10.2 8 Z" fill="#222"/></svg>
<div class="t" style="left:733.00px;width:600px;text-align:center;top:78.78px;height:15.80px;line-height:15.80px;font-size:7.9px;color:#333;font-weight:normal;font-style:normal;transform:scaleY(1.15);">Portfolio</div>
<div class="t" style="left:733.00px;width:600px;text-align:center;top:89.28px;height:15.80px;line-height:15.80px;font-size:7.9px;color:#333;font-weight:normal;font-style:normal;transform:scaleY(1.15);">Report</div>
<svg class="a" style="left:1064px;top:108.7px" width="6" height="4" viewBox="0 0 6 4"><path d="M0.40 0.70 L3 3.30 L5.60 0.70" fill="none" stroke="#444" stroke-width="0.9"/></svg>
<div class="a" style="left:5.00px;top:125.00px;width:91.00px;height:15.00px;background:#fff;border-radius:3px"></div>
<div class="t" style="left:8.00px;top:124.58px;height:16.00px;line-height:16.00px;font-size:8px;color:#222;font-weight:normal;font-style:normal;transform:scaleY(1.12);">CI115</div>
<svg class="a" style="left:87px;top:130px" width="8" height="5" viewBox="0 0 8 5"><path d="M0.5 0.5 L4 4 L7.5 0.5" fill="none" stroke="#333" stroke-width="1"/></svg>
<div class="a" style="left:103px;top:128px;width:1px;height:1px;background:#777;box-shadow:0 3px 0 #777,0 6px 0 #777"></div>
<div class="a" style="left:111.00px;top:125.00px;width:47.00px;height:15.00px;background:#fff;border-radius:3px"></div>
<svg class="a" style="left:114px;top:127px" width="44" height="11" viewBox="0 0 44 11"><path d="M2 2 L9 9 M9 2 L2 9" stroke="#bbb" stroke-width="0.9"/><path d="M15 5.5 L18 8.5 L24 2" fill="none" stroke="#bbb" stroke-width="0.9"/></svg>
<div class="t" style="left:145.50px;top:121.91px;height:21.00px;line-height:21.00px;font-size:10.5px;color:#222;font-weight:normal;font-style:italic;transform:scaleY(1.12);font-family:'Liberation Serif',serif">fx</div>
<div class="a" style="left:161.00px;top:125.00px;width:914.00px;height:15.00px;background:#fff;border-radius:3px"></div>
<svg class="a" style="left:1066px;top:130px" width="8" height="5" viewBox="0 0 8 5"><path d="M0.5 0.5 L4 4 L7.5 0.5" fill="none" stroke="#444" stroke-width="0.9"/></svg>
<div class="a" style="left:0.00px;top:142.00px;width:1068.00px;height:13.00px;background:#efefef;"></div>
<svg class="a" style="left:8px;top:146px" width="8" height="8" viewBox="0 0 8 8"><path d="M8 0 V8 H0 Z" fill="#d4d4d4"/></svg>
<div class="t" style="left:-273.60px;width:600px;text-align:center;top:141.79px;height:17.60px;line-height:17.60px;font-size:8.8px;color:#505050;font-weight:normal;font-style:normal;">A</div>
<div class="t" style="left:-246.00px;width:600px;text-align:center;top:141.79px;height:17.60px;line-height:17.60px;font-size:8.8px;color:#505050;font-weight:normal;font-style:normal;">B</div>
<div class="t" style="left:-208.00px;width:600px;text-align:center;top:141.79px;height:17.60px;line-height:17.60px;font-size:8.8px;color:#505050;font-weight:normal;font-style:normal;">C</div>
<div class="t" style="left:-185.60px;width:600px;text-align:center;top:141.79px;height:17.60px;line-height:17.60px;font-size:8.8px;color:#505050;font-weight:normal;font-style:normal;">D</div>
<div class="t" style="left:-170.00px;width:600px;text-align:center;top:141.79px;height:17.60px;line-height:17.60px;font-size:8.8px;color:#505050;font-weight:normal;font-style:normal;">E</div>
<div class="t" style="left:-153.00px;width:600px;text-align:center;top:141.79px;height:17.60px;line-height:17.60px;font-size:8.8px;color:#505050;font-weight:normal;font-style:normal;">F</div>
<div class="t" style="left:-133.30px;width:600px;text-align:center;top:141.79px;height:17.60px;line-height:17.60px;font-size:8.8px;color:#505050;font-weight:normal;font-style:normal;">H</div>
<div class="t" style="left:-106.00px;width:600px;text-align:center;top:141.79px;height:17.60px;line-height:17.60px;font-size:8.8px;color:#505050;font-weight:normal;font-style:normal;">I</div>
<div class="t" style="left:-76.60px;width:600px;text-align:center;top:141.79px;height:17.60px;line-height:17.60px;font-size:8.8px;color:#505050;font-weight:normal;font-style:normal;">J</div>
<div class="t" style="left:-47.20px;width:600px;text-align:center;top:141.79px;height:17.60px;line-height:17.60px;font-size:8.8px;color:#505050;font-weight:normal;font-style:normal;">K</div>
<div class="t" style="left:-17.80px;width:600px;text-align:center;top:141.79px;height:17.60px;line-height:17.60px;font-size:8.8px;color:#505050;font-weight:normal;font-style:normal;">L</div>
<div class="t" style="left:11.60px;width:600px;text-align:center;top:141.79px;height:17.60px;line-height:17.60px;font-size:8.8px;color:#505050;font-weight:normal;font-style:normal;">M</div>
<div class="t" style="left:41.00px;width:600px;text-align:center;top:141.79px;height:17.60px;line-height:17.60px;font-size:8.8px;color:#505050;font-weight:normal;font-style:normal;">N</div>
<div class="t" style="left:70.40px;width:600px;text-align:center;top:141.79px;height:17.60px;line-height:17.60px;font-size:8.8px;color:#505050;font-weight:normal;font-style:normal;">O</div>
<div class="t" style="left:99.80px;width:600px;text-align:center;top:141.79px;height:17.60px;line-height:17.60px;font-size:8.8px;color:#505050;font-weight:normal;font-style:normal;">P</div>
<div class="t" style="left:129.20px;width:600px;text-align:center;top:141.79px;height:17.60px;line-height:17.60px;font-size:8.8px;color:#505050;font-weight:normal;font-style:normal;">Q</div>
<div class="t" style="left:158.60px;width:600px;text-align:center;top:141.79px;height:17.60px;line-height:17.60px;font-size:8.8px;color:#505050;font-weight:normal;font-style:normal;">R</div>
<div class="t" style="left:188.00px;width:600px;text-align:center;top:141.79px;height:17.60px;line-height:17.60px;font-size:8.8px;color:#505050;font-weight:normal;font-style:normal;">S</div>
<div class="t" style="left:217.40px;width:600px;text-align:center;top:141.79px;height:17.60px;line-height:17.60px;font-size:8.8px;color:#505050;font-weight:normal;font-style:normal;">T</div>
<div class="t" style="left:246.80px;width:600px;text-align:center;top:141.79px;height:17.60px;line-height:17.60px;font-size:8.8px;color:#505050;font-weight:normal;font-style:normal;">U</div>
<div class="t" style="left:276.20px;width:600px;text-align:center;top:141.79px;height:17.60px;line-height:17.60px;font-size:8.8px;color:#505050;font-weight:normal;font-style:normal;">V</div>
<div class="t" style="left:305.60px;width:600px;text-align:center;top:141.79px;height:17.60px;line-height:17.60px;font-size:8.8px;color:#505050;font-weight:normal;font-style:normal;">W</div>
<div class="t" style="left:335.00px;width:600px;text-align:center;top:141.79px;height:17.60px;line-height:17.60px;font-size:8.8px;color:#505050;font-weight:normal;font-style:normal;">X</div>
<div class="t" style="left:364.40px;width:600px;text-align:center;top:141.79px;height:17.60px;line-height:17.60px;font-size:8.8px;color:#505050;font-weight:normal;font-style:normal;">Y</div>
<div class="t" style="left:393.80px;width:600px;text-align:center;top:141.79px;height:17.60px;line-height:17.60px;font-size:8.8px;color:#505050;font-weight:normal;font-style:normal;">Z</div>
<div class="t" style="left:423.20px;width:600px;text-align:center;top:141.79px;height:17.60px;line-height:17.60px;font-size:8.8px;color:#505050;font-weight:normal;font-style:normal;">AA</div>
<div class="t" style="left:452.60px;width:600px;text-align:center;top:141.79px;height:17.60px;line-height:17.60px;font-size:8.8px;color:#505050;font-weight:normal;font-style:normal;">AB</div>
<div class="t" style="left:482.00px;width:600px;text-align:center;top:141.79px;height:17.60px;line-height:17.60px;font-size:8.8px;color:#505050;font-weight:normal;font-style:normal;">AC</div>
<div class="t" style="left:511.40px;width:600px;text-align:center;top:141.79px;height:17.60px;line-height:17.60px;font-size:8.8px;color:#505050;font-weight:normal;font-style:normal;">AD</div>
<div class="t" style="left:540.80px;width:600px;text-align:center;top:141.79px;height:17.60px;line-height:17.60px;font-size:8.8px;color:#505050;font-weight:normal;font-style:normal;">AE</div>
<div class="t" style="left:570.20px;width:600px;text-align:center;top:141.79px;height:17.60px;line-height:17.60px;font-size:8.8px;color:#505050;font-weight:normal;font-style:normal;">AF</div>
<div class="t" style="left:599.60px;width:600px;text-align:center;top:141.79px;height:17.60px;line-height:17.60px;font-size:8.8px;color:#505050;font-weight:normal;font-style:normal;">AG</div>
<div class="t" style="left:629.00px;width:600px;text-align:center;top:141.79px;height:17.60px;line-height:17.60px;font-size:8.8px;color:#505050;font-weight:normal;font-style:normal;">AH</div>
<div class="t" style="left:658.40px;width:600px;text-align:center;top:141.79px;height:17.60px;line-height:17.60px;font-size:8.8px;color:#505050;font-weight:normal;font-style:normal;">AI</div>
<div class="t" style="left:687.80px;width:600px;text-align:center;top:141.79px;height:17.60px;line-height:17.60px;font-size:8.8px;color:#505050;font-weight:normal;font-style:normal;">AJ</div>
<div class="t" style="left:721.00px;width:600px;text-align:center;top:141.79px;height:17.60px;line-height:17.60px;font-size:8.8px;color:#505050;font-weight:normal;font-style:normal;">CF</div>
<div class="t" style="left:754.00px;width:600px;text-align:center;top:141.79px;height:17.60px;line-height:17.60px;font-size:8.8px;color:#505050;font-weight:normal;font-style:normal;">CG</div>
<div class="t" style="left:150.50px;top:141.79px;height:17.60px;line-height:17.60px;font-size:8.8px;color:#505050;font-weight:normal;font-style:normal;width:3px;overflow:hidden">G</div>
<div class="a" style="left:36.00px;top:143.00px;width:1.00px;height:12.00px;background:#e9e9e9;"></div>
<div class="a" style="left:72.00px;top:143.00px;width:1.00px;height:12.00px;background:#e9e9e9;"></div>
<div class="a" style="left:112.00px;top:143.00px;width:1.00px;height:12.00px;background:#e9e9e9;"></div>
<div class="a" style="left:154.00px;top:143.00px;width:1.00px;height:12.00px;background:#e9e9e9;"></div>
<div class="a" style="left:179.00px;top:143.00px;width:1.00px;height:12.00px;background:#e9e9e9;"></div>
<div class="a" style="left:209.00px;top:143.00px;width:1.00px;height:12.00px;background:#e9e9e9;"></div>
<div class="a" style="left:238.00px;top:143.00px;width:1.00px;height:12.00px;background:#e9e9e9;"></div>
<div class="a" style="left:268.00px;top:143.00px;width:0.00px;height:12.00px;background:#e9e9e9;"></div>
<div class="a" style="left:297.00px;top:143.00px;width:1.00px;height:12.00px;background:#e9e9e9;"></div>
<div class="a" style="left:326.00px;top:143.00px;width:1.00px;height:12.00px;background:#e9e9e9;"></div>
<div class="a" style="left:356.00px;top:143.00px;width:1.00px;height:12.00px;background:#e9e9e9;"></div>
<div class="a" style="left:385.00px;top:143.00px;width:1.00px;height:12.00px;background:#e9e9e9;"></div>
<div class="a" style="left:414.00px;top:143.00px;width:2.00px;height:12.00px;background:#e9e9e9;"></div>
<div class="a" style="left:444.00px;top:143.00px;width:1.00px;height:12.00px;background:#e9e9e9;"></div>
<div class="a" style="left:473.00px;top:143.00px;width:1.00px;height:12.00px;background:#e9e9e9;"></div>
<div class="a" style="left:503.00px;top:143.00px;width:1.00px;height:12.00px;background:#e9e9e9;"></div>
<div class="a" style="left:532.00px;top:143.00px;width:1.00px;height:12.00px;background:#e9e9e9;"></div>
<div class="a" style="left:562.00px;top:143.00px;width:0.00px;height:12.00px;background:#e9e9e9;"></div>
<div class="a" style="left:591.00px;top:143.00px;width:1.00px;height:12.00px;background:#e9e9e9;"></div>
<div class="a" style="left:620.00px;top:143.00px;width:1.00px;height:12.00px;background:#e9e9e9;"></div>
<div class="a" style="left:650.00px;top:143.00px;width:1.00px;height:12.00px;background:#e9e9e9;"></div>
<div class="a" style="left:679.00px;top:143.00px;width:1.00px;height:12.00px;background:#e9e9e9;"></div>
<div class="a" style="left:708.00px;top:143.00px;width:2.00px;height:12.00px;background:#e9e9e9;"></div>
<div class="a" style="left:738.00px;top:143.00px;width:1.00px;height:12.00px;background:#e9e9e9;"></div>
<div class="a" style="left:767.00px;top:143.00px;width:1.00px;height:12.00px;background:#e9e9e9;"></div>
<div class="a" style="left:797.00px;top:143.00px;width:1.00px;height:12.00px;background:#e9e9e9;"></div>
<div class="a" style="left:826.00px;top:143.00px;width:1.00px;height:12.00px;background:#e9e9e9;"></div>
<div class="a" style="left:856.00px;top:143.00px;width:0.00px;height:12.00px;background:#e9e9e9;"></div>
<div class="a" style="left:885.00px;top:143.00px;width:1.00px;height:12.00px;background:#e9e9e9;"></div>
<div class="a" style="left:914.00px;top:143.00px;width:1.00px;height:12.00px;background:#e9e9e9;"></div>
<div class="a" style="left:944.00px;top:143.00px;width:1.00px;height:12.00px;background:#e9e9e9;"></div>
<div class="a" style="left:973.00px;top:143.00px;width:1.00px;height:12.00px;background:#e9e9e9;"></div>
<div class="a" style="left:1002.00px;top:143.00px;width:2.00px;height:12.00px;background:#e9e9e9;"></div>
<div class="a" style="left:1040.00px;top:143.00px;width:1.00px;height:12.00px;background:#e9e9e9;"></div>
<div class="a" style="left:0.00px;top:155.00px;width:17.00px;height:376.00px;background:#efefef;"></div>
<div class="t" style="left:-291.10px;width:600px;text-align:center;top:195.39px;height:18.60px;line-height:18.60px;font-size:9.3px;color:#474747;font-weight:normal;font-style:normal;">1</div>
<div class="t" style="left:-291.10px;width:600px;text-align:center;top:217.49px;height:18.60px;line-height:18.60px;font-size:9.3px;color:#474747;font-weight:normal;font-style:normal;">2</div>
<div class="t" style="left:-291.10px;width:600px;text-align:center;top:232.09px;height:18.60px;line-height:18.60px;font-size:9.3px;color:#474747;font-weight:normal;font-style:normal;">3</div>
<div class="t" style="left:-291.10px;width:600px;text-align:center;top:241.19px;height:18.60px;line-height:18.60px;font-size:9.3px;color:#474747;font-weight:normal;font-style:normal;">4</div>
<div class="t" style="left:-291.10px;width:600px;text-align:center;top:258.39px;height:18.60px;line-height:18.60px;font-size:9.3px;color:#474747;font-weight:normal;font-style:normal;">5</div>
<div class="t" style="left:-291.10px;width:600px;text-align:center;top:270.29px;height:18.60px;line-height:18.60px;font-size:9.3px;color:#474747;font-weight:normal;font-style:normal;">6</div>
<div class="t" style="left:-291.10px;width:600px;text-align:center;top:281.59px;height:18.60px;line-height:18.60px;font-size:9.3px;color:#474747;font-weight:normal;font-style:normal;">7</div>
<div class="t" style="left:-291.10px;width:600px;text-align:center;top:292.89px;height:18.60px;line-height:18.60px;font-size:9.3px;color:#474747;font-weight:normal;font-style:normal;">8</div>
<div class="t" style="left:-291.10px;width:600px;text-align:center;top:304.19px;height:18.60px;line-height:18.60px;font-size:9.3px;color:#474747;font-weight:normal;font-style:normal;">9</div>
<div class="t" style="left:-291.10px;width:600px;text-align:center;top:315.49px;height:18.60px;line-height:18.60px;font-size:9.3px;color:#474747;font-weight:normal;font-style:normal;">10</div>
<div class="t" style="left:-291.10px;width:600px;text-align:center;top:327.29px;height:18.60px;line-height:18.60px;font-size:9.3px;color:#474747;font-weight:normal;font-style:normal;">11</div>
<div class="t" style="left:-291.10px;width:600px;text-align:center;top:345.29px;height:18.60px;line-height:18.60px;font-size:9.3px;color:#474747;font-weight:normal;font-style:normal;">13</div>
<div class="t" style="left:-291.10px;width:600px;text-align:center;top:375.79px;height:18.60px;line-height:18.60px;font-size:9.3px;color:#474747;font-weight:normal;font-style:normal;">14</div>
<div class="t" style="left:-291.10px;width:600px;text-align:center;top:387.19px;height:18.60px;line-height:18.60px;font-size:9.3px;color:#474747;font-weight:normal;font-style:normal;">15</div>
<div class="t" style="left:-291.10px;width:600px;text-align:center;top:398.61px;height:18.60px;line-height:18.60px;font-size:9.3px;color:#474747;font-weight:normal;font-style:normal;">16</div>
<div class="t" style="left:-291.10px;width:600px;text-align:center;top:410.03px;height:18.60px;line-height:18.60px;font-size:9.3px;color:#474747;font-weight:normal;font-style:normal;">17</div>
<div class="t" style="left:-291.10px;width:600px;text-align:center;top:421.45px;height:18.60px;line-height:18.60px;font-size:9.3px;color:#474747;font-weight:normal;font-style:normal;">18</div>
<div class="t" style="left:-291.10px;width:600px;text-align:center;top:432.87px;height:18.60px;line-height:18.60px;font-size:9.3px;color:#474747;font-weight:normal;font-style:normal;">19</div>
<div class="t" style="left:-291.10px;width:600px;text-align:center;top:444.29px;height:18.60px;line-height:18.60px;font-size:9.3px;color:#474747;font-weight:normal;font-style:normal;">20</div>
<div class="t" style="left:-291.10px;width:600px;text-align:center;top:455.71px;height:18.60px;line-height:18.60px;font-size:9.3px;color:#474747;font-weight:normal;font-style:normal;">21</div>
<div class="t" style="left:-291.10px;width:600px;text-align:center;top:467.13px;height:18.60px;line-height:18.60px;font-size:9.3px;color:#474747;font-weight:normal;font-style:normal;">22</div>
<div class="t" style="left:-291.10px;width:600px;text-align:center;top:478.55px;height:18.60px;line-height:18.60px;font-size:9.3px;color:#474747;font-weight:normal;font-style:normal;">23</div>
<div class="t" style="left:-291.10px;width:600px;text-align:center;top:489.97px;height:18.60px;line-height:18.60px;font-size:9.3px;color:#474747;font-weight:normal;font-style:normal;">24</div>
<div class="t" style="left:-291.10px;width:600px;text-align:center;top:501.39px;height:18.60px;line-height:18.60px;font-size:9.3px;color:#474747;font-weight:normal;font-style:normal;">25</div>
<div class="t" style="left:-291.10px;width:600px;text-align:center;top:512.81px;height:18.60px;line-height:18.60px;font-size:9.3px;color:#474747;font-weight:normal;font-style:normal;">26</div>
<div class="t" style="left:-291.10px;width:600px;text-align:center;top:524.23px;height:18.60px;line-height:18.60px;font-size:9.3px;color:#474747;font-weight:normal;font-style:normal;">27</div>
<div class="t" style="left:-291.30px;width:600px;text-align:center;top:339.74px;height:7.00px;line-height:7.00px;font-size:3.5px;color:#555;font-weight:normal;font-style:normal;">12</div>
<div class="a" style="left:1068.00px;top:142.00px;width:12.00px;height:389.00px;background:#f3f3f3;"></div>
<svg class="a" style="left:1072px;top:147px" width="7" height="5" viewBox="0 0 7 5"><path d="M0.5 4.5 L3.5 0.5 L6.5 4.5 Z" fill="#666"/></svg>
<div class="a" style="left:1072.00px;top:156.00px;width:6.00px;height:97.00px;background:#8a8a8a;border-radius:3px"></div>
<svg class="a" style="left:1072px;top:522px" width="7" height="5" viewBox="0 0 7 5"><path d="M0.5 0.5 L3.5 4.5 L6.5 0.5 Z" fill="#666"/></svg>
<div class="a" style="left:17.00px;top:155.00px;width:1051.00px;height:376.00px;background:#343233;"></div>
<div class="a" style="left:17.00px;top:346.00px;width:985.00px;height:185.00px;background:#4b4747;"></div>
<div class="t s" style="left:20.60px;top:165.72px;height:34.50px;line-height:34.50px;font-size:17.25px;color:#f4f4f4;font-weight:normal;font-style:normal;">Timber Cutting List Optimisation Tool</div>
<svg class="a" style="left:432.3px;top:157.8px" width="99.1" height="69.4" viewBox="0 0 99.1 69.4">
<rect width="99.1" height="69.4" fill="#fff"/>
<defs><linearGradient id="tooth" x1="0" x2="1" y1="0" y2="0"><stop offset="0" stop-color="#b9bfc2"/><stop offset="0.6" stop-color="#8f979b"/><stop offset="1" stop-color="#2c3338"/></linearGradient><linearGradient id="tshade" x1="0" x2="0" y1="0" y2="1"><stop offset="0" stop-color="#fff" stop-opacity="0.35"/><stop offset="0.5" stop-color="#fff" stop-opacity="0"/><stop offset="1" stop-color="#000" stop-opacity="0.35"/></linearGradient>
<linearGradient id="blade" x1="0" x2="0" y1="0" y2="1"><stop offset="0" stop-color="#d0d4d6"/><stop offset="1" stop-color="#7b8388"/></linearGradient></defs>
<path d="M3.1 13.3 L39.7 9.1 L94.4 19 L41.1 29.6 Z" fill="#bf9862"/>
<path d="M3.1 13.3 L41.1 29.6 L41.9 38.7 L4.6 20.1 Z" fill="#cba673"/>
<path d="M41.1 29.6 L94.4 19.7 L94.4 25.8 L42 38 Z" fill="#e2c797"/>
<path d="M42 17.4 L64.8 25.8" stroke="#e0d0b0" stroke-width="0.9"/>
<path d="M44.3 2.6 L73.9 12.9 L71.6 21.2 L68 19 L66 20 L62 17 L60 18 L56 15 L54 16 L50 13 L48 14 L45 9.1 Z" fill="url(#blade)"/>
<path d="M44.3 2.6 L73.9 12.9" stroke="#5d6368" stroke-width="0.6"/>
<path d="M4.3 50.6 L18.2 45.5 L18.7 50.2 L31.2 45.5 L31.6 50.2 L45.1 46 L45.5 50.2 L58 45.5 L58.9 50.2 L71 46 L73.8 51.1 L73.8 59.4 L4.3 59.4 Z" fill="url(#tooth)"/><path d="M4.3 50.6 L18.2 45.5 L18.7 50.2 L31.2 45.5 L31.6 50.2 L45.1 46 L45.5 50.2 L58 45.5 L58.9 50.2 L71 46 L73.8 51.1 L73.8 59.4 L4.3 59.4 Z" fill="url(#tshade)"/>
<rect x="65.5" y="37.2" width="13.5" height="2.2" fill="#e8a0a0"/>
<path d="M80.7 35.7 L84 33 L89 32.6" stroke="#e07070" stroke-width="0.6" fill="none"/>
<rect x="78.4" y="56.8" width="13" height="1.8" fill="#e8a0a0"/>
<path d="M3 64.5 H78 M3 66.8 H99 M80 63.5 H99" stroke="#c4c4c4" stroke-width="0.8"/>
<path d="M84 60.5 V69.4" stroke="#c84a4a" stroke-width="0.8"/>
</svg>
<div class="a" style="left:584.00px;top:159.00px;width:86.00px;height:27.00px;background:#efefef;"></div>
<div class="t s" style="left:327.10px;width:600px;text-align:center;top:164.39px;height:17.50px;line-height:17.50px;font-size:8.75px;color:#222;font-weight:normal;font-style:normal;">Optimise Cut List</div>
<div class="a" style="left:674.00px;top:159.00px;width:85.00px;height:27.00px;background:#efefef;"></div>
<div class="t s" style="left:416.60px;width:600px;text-align:center;top:164.39px;height:17.50px;line-height:17.50px;font-size:8.75px;color:#222;font-weight:normal;font-style:normal;">Update All / Refresh</div>
<div class="a" style="left:624.00px;top:192.00px;width:94.00px;height:20.00px;background:#efefef;"></div>
<div class="t s" style="left:371.00px;width:600px;text-align:center;top:193.69px;height:17.50px;line-height:17.50px;font-size:8.75px;color:#222;font-weight:normal;font-style:normal;">Refresh Graph Scale</div>
<svg class="a" style="left:886.2px;top:160.2px" width="111.1" height="58.5" viewBox="0 0 111.1 58.5">
<rect width="111.1" height="58.5" fill="#d8a874"/><g stroke="#a36d3d" stroke-width="0.45">
<path d="M0 0 H111.1 V12 L90 10 L60 14 L35 10 L0 3 Z" fill="#ecca98"/>
<path d="M0 3 L35 10 L60 14 L50 19 L27 20 L0 9 Z" fill="#f0d3a6"/>
<path d="M0 9 L27 19.3 L13 23.6 L0 18 Z" fill="#ebc893"/>
<path d="M1 7.4 L27 19.3 M1 17 L13 23.6 M10 3 L50 18.5 M0 0.5 L70 1 M40 5 L88 9" stroke="#b98350" stroke-width="0.6" fill="none"/>
<path d="M26.8 19.3 L49.4 18.2 L49.4 31.1 L30.1 34.4 Z" fill="#e6b780"/>
<path d="M12.8 23.6 L26.8 20.4 L27.9 34.4 L13.9 33.3 Z" fill="#e9bd87"/>
<path d="M0 18 L12.8 23.6 L13.9 33.3 L0 30 Z" fill="#edc894"/>
<path d="M0 30 L13.9 33.3 L17.1 36.5 L14 41.9 L0 44 Z" fill="#f0cf9c"/>
<path d="M31.1 34.4 L52.7 31.1 L53.8 46.2 L40.8 50.5 Z" fill="#ebc18c"/>
<path d="M17.1 36.5 L31.1 36.5 L34.4 49.4 L20.4 50.5 Z" fill="#e4b683"/>
<path d="M0 44 L13.9 41.9 L16 54.8 L0 56 Z" fill="#e8bd88"/>
<path d="M16 50 L33 50 L33 58.5 L14 58.5 Z" fill="#c88b52"/>
<path d="M33.3 51.6 L54.8 46.2 L54.8 58.5 L33.3 58.5 Z" fill="#dc9452"/>
<path d="M26.8 19.3 L30.1 34.4 M49.4 18.2 L49.4 31.1 M12.8 23.6 L13.9 33.3 M31.1 34.4 L40.8 50.5 M17.1 36.5 L20.4 50.5 M14 41.9 L16 54.8 M0 44 L14 41.9" stroke="#9c6a3c" stroke-width="0.7" fill="none"/>
<path d="M70 1 L109.8 2 L108.8 9.6 L101.2 15 L73.2 7.4 Z" fill="#efcf9f"/>
<path d="M84 10.7 L111.1 10.7 L111.1 22.5 L99 22.5 L84 15 Z" fill="#6b4424"/>
<path d="M60 14 L74 7 L101 15 L88.3 30 L66 24 Z" fill="#f0d0a0"/>
<path d="M74.3 18.2 L88.3 15 L100.1 21.4 L88.3 30 L74.3 23.6 Z" fill="#f3d7aa"/>
<path d="M57 31.1 L68.9 22.5 L89.4 30 L78.6 44 Z" fill="#f0d09c"/>
<path d="M57 31.1 L78.6 44 L78.6 46.2 L57 35.4 Z" fill="#c98e55"/>
<path d="M84 38.7 L103.4 25.7 L105.5 31.1 L86.1 45.1 Z" fill="#f0cf9c"/>
<path d="M99 22.5 L111.1 22.5 L111.1 45 L105.5 34 Z" fill="#d7a06a"/>
<path d="M64.6 46.2 L105.5 34.4 L109.8 45.1 L96.9 57 L64.6 54.8 Z" fill="#e2b278"/>
<path d="M53.8 45.1 L64.6 48.4 L64.6 58.5 L53.8 58.5 Z" fill="#c98a50"/>
<path d="M96.9 57 L111.1 45 L111.1 58.5 L96 58.5 Z" fill="#c99060"/>
<path d="M57 35.4 L53.8 45 M78.6 46.2 L64.6 48.4 M86.1 45.1 L105.5 34.4 M74.3 23.6 L68.9 22.5" stroke="#9c6a3c" stroke-width="0.7" fill="none"/>
</g></svg>
<div class="t s" style="left:720.00px;width:600px;text-align:center;top:167.39px;height:18.40px;line-height:18.40px;font-size:9.2px;color:#f2f2f2;font-weight:bold;font-style:italic;">KDM</div>
<div class="t s" style="left:720.00px;width:600px;text-align:center;top:179.19px;height:18.40px;line-height:18.40px;font-size:9.2px;color:#f2f2f2;font-weight:bold;font-style:italic;">V2a</div>
<div class="t s" style="left:-530.40px;width:600px;text-align:right;top:232.86px;height:12.80px;line-height:12.80px;font-size:6.4px;color:#e6e6e6;font-weight:normal;font-style:normal;">Units:</div>
<div class="a" style="left:71.00px;top:231.00px;width:41.00px;height:16.00px;background:#151515;border-radius:1px"></div>
<div class="a" style="left:72.00px;top:232.00px;width:39.00px;height:14.00px;background:#a6a6a6;"></div>
<div class="t s" style="left:-208.50px;width:600px;text-align:center;top:231.28px;height:16.60px;line-height:16.60px;font-size:8.3px;color:#fafafa;font-weight:normal;font-style:normal;">Metric</div>
<div class="t s" style="left:180.40px;top:220.56px;height:13.00px;line-height:13.00px;font-size:6.5px;color:#e6e6e6;font-weight:normal;font-style:normal;">Ref:</div>
<div class="a" style="left:178.00px;top:231.00px;width:31.00px;height:16.00px;background:#151515;border-radius:1px"></div>
<div class="a" style="left:179.00px;top:232.00px;width:29.00px;height:14.00px;background:#a6a6a6;"></div>
<div class="t s" style="left:-106.30px;width:600px;text-align:center;top:231.78px;height:15.60px;line-height:15.60px;font-size:7.8px;color:#fafafa;font-weight:bold;font-style:normal;">A1</div>
<div class="t s" style="left:210.00px;top:220.22px;height:13.70px;line-height:13.70px;font-size:6.85px;color:#e6e6e6;font-weight:normal;font-style:normal;">Standard Stock Size:</div>
<div class="a" style="left:209.00px;top:232.00px;width:323.00px;height:22.00px;background:#a6a6a6;"></div>
<div class="t s" style="left:70.00px;width:600px;text-align:center;top:235.39px;height:17.40px;line-height:17.40px;font-size:8.7px;color:#f7f7f7;font-weight:normal;font-style:normal;">Softwood Timber 70mm(Fin) x 70mm(Fin) - [Nominal 75 x 75 or 3&quot; x 3&quot;]</div>
<div class="t s" style="left:556.20px;top:220.52px;height:13.70px;line-height:13.70px;font-size:6.85px;color:#e6e6e6;font-weight:normal;font-style:normal;">Stock Length</div>
<div class="a" style="left:560.00px;top:231.00px;width:31.00px;height:16.00px;background:#151515;border-radius:1px"></div>
<div class="a" style="left:561.00px;top:232.00px;width:29.00px;height:14.00px;background:#a6a6a6;"></div>
<div class="t s" style="left:-11.00px;width:600px;text-align:right;top:231.28px;height:16.60px;line-height:16.60px;font-size:8.3px;color:#fafafa;font-weight:normal;font-style:normal;">4200</div>
<div class="t s" style="left:592.50px;top:233.27px;height:13.60px;line-height:13.60px;font-size:6.8px;color:#e6e6e6;font-weight:normal;font-style:normal;">mm</div>
<div class="t s" style="left:334.00px;width:600px;text-align:center;top:233.27px;height:13.60px;line-height:13.60px;font-size:6.8px;color:#e6e6e6;font-weight:normal;font-style:normal;">x</div>
<div class="a" style="left:650.00px;top:232.00px;width:28.00px;height:14.00px;background:#c9a194;"></div>
<div class="t s" style="left:77.50px;width:600px;text-align:right;top:232.57px;height:14.00px;line-height:14.00px;font-size:7px;color:#1c1414;font-weight:bold;font-style:normal;">€4.67</div>
<div class="t s" style="left:680.50px;top:232.77px;height:13.60px;line-height:13.60px;font-size:6.8px;color:#e6e6e6;font-weight:normal;font-style:normal;">Per M</div>
<div class="t s" style="left:709.60px;top:232.72px;height:13.70px;line-height:13.70px;font-size:6.85px;color:#e6e6e6;font-weight:normal;font-style:normal;">Lengths Required =</div>
<div class="t s" style="left:511.20px;width:600px;text-align:center;top:210.37px;height:13.80px;line-height:13.80px;font-size:6.9px;color:#e6e6e6;font-weight:normal;font-style:normal;">Total</div>
<div class="t s" style="left:511.20px;width:600px;text-align:center;top:219.47px;height:13.80px;line-height:13.80px;font-size:6.9px;color:#e6e6e6;font-weight:normal;font-style:normal;">Units</div>
<div class="a" style="left:797.00px;top:232.00px;width:29.00px;height:14.00px;background:#c9a194;"></div>
<div class="t s" style="left:511.20px;width:600px;text-align:center;top:232.07px;height:14.40px;line-height:14.40px;font-size:7.2px;color:#1c1414;font-weight:bold;font-style:normal;">2</div>
<div class="t s" style="left:540.00px;width:600px;text-align:center;top:233.27px;height:13.60px;line-height:13.60px;font-size:6.8px;color:#e6e6e6;font-weight:normal;font-style:normal;">x</div>
<div class="t s" style="left:570.00px;width:600px;text-align:center;top:220.37px;height:13.80px;line-height:13.80px;font-size:6.9px;color:#e6e6e6;font-weight:normal;font-style:normal;">Unit Cost</div>
<div class="a" style="left:855.00px;top:232.00px;width:29.00px;height:14.00px;background:#c9a194;"></div>
<div class="t s" style="left:283.00px;width:600px;text-align:right;top:232.27px;height:14.00px;line-height:14.00px;font-size:7px;color:#1c1414;font-weight:bold;font-style:normal;">£19.61</div>
<div class="t s" style="left:886.00px;top:232.67px;height:13.80px;line-height:13.80px;font-size:6.9px;color:#e6e6e6;font-weight:normal;font-style:normal;">Each</div>
<div class="t s" style="left:643.00px;width:600px;text-align:center;top:220.37px;height:13.80px;line-height:13.80px;font-size:6.9px;color:#e6e6e6;font-weight:normal;font-style:normal;">Tot Cost</div>
<div class="a" style="left:914.00px;top:232.00px;width:58.00px;height:14.00px;background:#c9a194;"></div>
<div class="t s" style="left:643.00px;width:600px;text-align:center;top:231.28px;height:16.00px;line-height:16.00px;font-size:8px;color:#1c1414;font-weight:bold;font-style:normal;">£39.23</div>
<div class="t s" style="left:721.00px;width:600px;text-align:center;top:220.37px;height:13.80px;line-height:13.80px;font-size:6.9px;color:#e6e6e6;font-weight:normal;font-style:normal;">View Opt</div>
<div class="a" style="left:1002.00px;top:232.00px;width:38.00px;height:14.00px;background:#6d5252;"></div>
<div class="t s" style="left:721.00px;width:600px;text-align:center;top:231.77px;height:15.00px;line-height:15.00px;font-size:7.5px;color:#e8dede;font-weight:normal;font-style:normal;">5</div>
<div class="t s" style="left:-246.00px;width:600px;text-align:center;top:258.07px;height:13.80px;line-height:13.80px;font-size:6.9px;color:#e6e6e6;font-weight:normal;font-style:normal;">First Entry</div>
<div class="t s" style="left:-208.00px;width:600px;text-align:center;top:258.07px;height:13.80px;line-height:13.80px;font-size:6.9px;color:#e6e6e6;font-weight:normal;font-style:normal;">Last Entry</div>
<div class="t s" style="left:-169.40px;width:600px;text-align:center;top:258.07px;height:13.80px;line-height:13.80px;font-size:6.9px;color:#e6e6e6;font-weight:normal;font-style:normal;">Check</div>
<div class="t s" style="left:-246.00px;width:600px;text-align:center;top:272.37px;height:14.20px;line-height:14.20px;font-size:7.1px;color:#e0896f;font-weight:normal;font-style:normal;">$B$15</div>
<div class="t s" style="left:-208.00px;width:600px;text-align:center;top:272.37px;height:14.20px;line-height:14.20px;font-size:7.1px;color:#e0896f;font-weight:normal;font-style:normal;">$C$17</div>
<div class="t s" style="left:-169.40px;width:600px;text-align:center;top:272.37px;height:14.20px;line-height:14.20px;font-size:7.1px;color:#e0896f;font-weight:normal;font-style:normal;">Ok</div>
<div class="t s" style="left:-246.00px;width:600px;text-align:center;top:284.37px;height:13.80px;line-height:13.80px;font-size:6.9px;color:#e6e6e6;font-weight:normal;font-style:normal;">Max Ref</div>
<div class="t s" style="left:-208.00px;width:600px;text-align:center;top:284.37px;height:13.80px;line-height:13.80px;font-size:6.9px;color:#e6e6e6;font-weight:normal;font-style:normal;">Smallest</div>
<div class="t s" style="left:-169.40px;width:600px;text-align:center;top:284.37px;height:13.80px;line-height:13.80px;font-size:6.9px;color:#e6e6e6;font-weight:normal;font-style:normal;">Largest</div>
<div class="t s" style="left:-132.80px;width:600px;text-align:center;top:284.37px;height:13.80px;line-height:13.80px;font-size:6.9px;color:#e6e6e6;font-weight:normal;font-style:normal;">Kerf (mm)</div>
<div class="t s" style="left:-246.00px;width:600px;text-align:center;top:295.17px;height:14.20px;line-height:14.20px;font-size:7.1px;color:#e0896f;font-weight:normal;font-style:normal;">100</div>
<div class="t s" style="left:-208.00px;width:600px;text-align:center;top:295.17px;height:14.20px;line-height:14.20px;font-size:7.1px;color:#e0896f;font-weight:normal;font-style:normal;">150</div>
<div class="t s" style="left:-169.40px;width:600px;text-align:center;top:295.17px;height:14.20px;line-height:14.20px;font-size:7.1px;color:#e0896f;font-weight:normal;font-style:normal;">1085</div>
<div class="t s" style="left:-132.80px;width:600px;text-align:center;top:295.17px;height:14.20px;line-height:14.20px;font-size:7.1px;color:#e0896f;font-weight:normal;font-style:normal;">2.2</div>
<div class="t s" style="left:-246.00px;width:600px;text-align:center;top:307.17px;height:13.80px;line-height:13.80px;font-size:6.9px;color:#e6e6e6;font-weight:normal;font-style:normal;">Max CPP</div>
<div class="t s" style="left:-208.00px;width:600px;text-align:center;top:307.17px;height:13.80px;line-height:13.80px;font-size:6.9px;color:#e6e6e6;font-weight:normal;font-style:normal;">Grid</div>
<div class="t s" style="left:-169.40px;width:600px;text-align:center;top:307.17px;height:13.80px;line-height:13.80px;font-size:6.9px;color:#e6e6e6;font-weight:normal;font-style:normal;">Tot Cuts</div>
<div class="t s" style="left:-132.80px;width:600px;text-align:center;top:307.17px;height:13.80px;line-height:13.80px;font-size:6.9px;color:#e6e6e6;font-weight:normal;font-style:normal;">Kerf (In)</div>
<div class="t s" style="left:-246.00px;width:600px;text-align:center;top:317.97px;height:14.20px;line-height:14.20px;font-size:7.1px;color:#e0896f;font-weight:normal;font-style:normal;">75</div>
<div class="t s" style="left:-208.00px;width:600px;text-align:center;top:317.97px;height:14.20px;line-height:14.20px;font-size:7.1px;color:#e0896f;font-weight:normal;font-style:normal;">$H$15</div>
<div class="t s" style="left:-169.40px;width:600px;text-align:center;top:317.97px;height:14.20px;line-height:14.20px;font-size:7.1px;color:#e0896f;font-weight:normal;font-style:normal;">17</div>
<div class="t s" style="left:-132.80px;width:600px;text-align:center;top:317.97px;height:14.20px;line-height:14.20px;font-size:7.1px;color:#e0896f;font-weight:normal;font-style:normal;">3/32</div>
<div class="t s" style="left:210.00px;top:257.87px;height:13.80px;line-height:13.80px;font-size:6.9px;color:#e6e6e6;font-weight:normal;font-style:normal;">Checks:</div>
<div class="t s" style="left:210.00px;top:272.87px;height:13.80px;line-height:13.80px;font-size:6.9px;color:#8fc35a;font-weight:normal;font-style:normal;">All Ok</div>
<div class="t s" style="left:205.80px;top:283.97px;height:13.80px;line-height:13.80px;font-size:6.9px;color:#e6e6e6;font-weight:normal;font-style:normal;">Instructions:</div>
<div class="t s" style="left:210.00px;top:294.54px;height:13.66px;line-height:13.66px;font-size:6.83px;color:#8fc35a;font-weight:normal;font-style:normal;white-space:pre;letter-spacing:0px">Choose units (Metric/Imperial) in (C3), Enter Ref in (I3) this is optional and free text, Choose Standard</div>
<div class="t s" style="left:210.00px;top:303.29px;height:13.66px;line-height:13.66px;font-size:6.83px;color:#8fc35a;font-weight:normal;font-style:normal;white-space:pre;letter-spacing:0px">Stock Size from data list (J3) , Enter required Quantity and Length of cuts  in (B15-C114). Enter the</div>
<div class="t s" style="left:210.00px;top:312.04px;height:13.66px;line-height:13.66px;font-size:6.83px;color:#8fc35a;font-weight:normal;font-style:normal;white-space:pre;letter-spacing:-0.045px">options you want to include in the calculations with (Yes/No) in (Y6-Y11) if you want to use shorter lengths</div>
<div class="t s" style="left:210.00px;top:320.79px;height:13.66px;line-height:13.66px;font-size:6.83px;color:#8fc35a;font-weight:normal;font-style:normal;white-space:pre;letter-spacing:0px">or exclude options. Finally - Press Optimise Cut List button above. Then press Update All/Refresh. The</div>
<div class="t s" style="left:210.00px;top:329.54px;height:13.66px;line-height:13.66px;font-size:6.83px;color:#8fc35a;font-weight:normal;font-style:normal;white-space:pre;letter-spacing:-0.02px">solution will be displayed below in the table and also the cut list graph at the bottom of this page.</div>
<div class="a" style="left:561.00px;top:273.00px;width:118.00px;height:69.00px;background:#4b4747;"></div>
<div class="a" style="left:649.00px;top:273.00px;width:30.00px;height:69.00px;background:#7b4a3a;"></div>
<div class="a" style="left:590.00px;top:273.00px;width:30.00px;height:69.00px;background:#111;"></div>
<div class="t s" style="left:275.70px;width:600px;text-align:center;top:258.17px;height:13.80px;line-height:13.80px;font-size:6.9px;color:#e6e6e6;font-weight:normal;font-style:normal;">Opts</div>
<div class="t s" style="left:305.00px;width:600px;text-align:center;top:258.17px;height:13.80px;line-height:13.80px;font-size:6.9px;color:#e6e6e6;font-weight:normal;font-style:normal;">mm</div>
<div class="t s" style="left:334.50px;width:600px;text-align:center;top:258.17px;height:13.80px;line-height:13.80px;font-size:6.9px;color:#e6e6e6;font-weight:normal;font-style:normal;">P</div>
<div class="t s" style="left:363.70px;width:600px;text-align:center;top:258.17px;height:13.80px;line-height:13.80px;font-size:6.9px;color:#e6e6e6;font-weight:normal;font-style:normal;">Include</div>
<div class="a" style="left:591.00px;top:274.00px;width:28.00px;height:10.00px;background:#a6a6a6;"></div>
<div class="t s" style="left:275.70px;width:600px;text-align:center;top:272.21px;height:14.60px;line-height:14.60px;font-size:7.3px;color:#e0e0e0;font-weight:normal;font-style:normal;">1</div>
<div class="t s" style="left:18.00px;width:600px;text-align:right;top:271.22px;height:16.60px;line-height:16.60px;font-size:8.3px;color:#fafafa;font-weight:normal;font-style:normal;">1800</div>
<div class="t s" style="left:334.50px;width:600px;text-align:center;top:272.21px;height:14.60px;line-height:14.60px;font-size:7.3px;color:#e0e0e0;font-weight:normal;font-style:normal;">Yes</div>
<div class="t s" style="left:363.70px;width:600px;text-align:center;top:272.21px;height:14.60px;line-height:14.60px;font-size:7.3px;color:#f0e6e2;font-weight:normal;font-style:normal;">Yes</div>
<div class="a" style="left:591.00px;top:285.00px;width:28.00px;height:10.00px;background:#a6a6a6;"></div>
<div class="t s" style="left:275.70px;width:600px;text-align:center;top:283.70px;height:14.60px;line-height:14.60px;font-size:7.3px;color:#e0e0e0;font-weight:normal;font-style:normal;">2</div>
<div class="t s" style="left:18.00px;width:600px;text-align:right;top:282.71px;height:16.60px;line-height:16.60px;font-size:8.3px;color:#fafafa;font-weight:normal;font-style:normal;">2400</div>
<div class="t s" style="left:334.50px;width:600px;text-align:center;top:283.70px;height:14.60px;line-height:14.60px;font-size:7.3px;color:#e0e0e0;font-weight:normal;font-style:normal;">Yes</div>
<div class="t s" style="left:363.70px;width:600px;text-align:center;top:283.70px;height:14.60px;line-height:14.60px;font-size:7.3px;color:#f0e6e2;font-weight:normal;font-style:normal;">Yes</div>
<div class="a" style="left:591.00px;top:297.00px;width:28.00px;height:10.00px;background:#a6a6a6;"></div>
<div class="t s" style="left:275.70px;width:600px;text-align:center;top:295.18px;height:14.60px;line-height:14.60px;font-size:7.3px;color:#e0e0e0;font-weight:normal;font-style:normal;">3</div>
<div class="t s" style="left:18.00px;width:600px;text-align:right;top:294.19px;height:16.60px;line-height:16.60px;font-size:8.3px;color:#fafafa;font-weight:normal;font-style:normal;">3000</div>
<div class="t s" style="left:334.50px;width:600px;text-align:center;top:295.18px;height:14.60px;line-height:14.60px;font-size:7.3px;color:#e0e0e0;font-weight:normal;font-style:normal;">Yes</div>
<div class="t s" style="left:363.70px;width:600px;text-align:center;top:295.18px;height:14.60px;line-height:14.60px;font-size:7.3px;color:#f0e6e2;font-weight:normal;font-style:normal;">Yes</div>
<div class="a" style="left:591.00px;top:308.00px;width:28.00px;height:10.00px;background:#a6a6a6;"></div>
<div class="t s" style="left:275.70px;width:600px;text-align:center;top:306.66px;height:14.60px;line-height:14.60px;font-size:7.3px;color:#e0e0e0;font-weight:normal;font-style:normal;">4</div>
<div class="t s" style="left:18.00px;width:600px;text-align:right;top:305.67px;height:16.60px;line-height:16.60px;font-size:8.3px;color:#fafafa;font-weight:normal;font-style:normal;">3600</div>
<div class="t s" style="left:334.50px;width:600px;text-align:center;top:306.66px;height:14.60px;line-height:14.60px;font-size:7.3px;color:#e0e0e0;font-weight:normal;font-style:normal;">Yes</div>
<div class="t s" style="left:363.70px;width:600px;text-align:center;top:306.66px;height:14.60px;line-height:14.60px;font-size:7.3px;color:#f0e6e2;font-weight:normal;font-style:normal;">Yes</div>
<div class="a" style="left:591.00px;top:320.00px;width:28.00px;height:10.00px;background:#a6a6a6;"></div>
<div class="t s" style="left:275.70px;width:600px;text-align:center;top:318.15px;height:14.60px;line-height:14.60px;font-size:7.3px;color:#e0e0e0;font-weight:normal;font-style:normal;">5</div>
<div class="t s" style="left:18.00px;width:600px;text-align:right;top:317.16px;height:16.60px;line-height:16.60px;font-size:8.3px;color:#fafafa;font-weight:normal;font-style:normal;">4200</div>
<div class="t s" style="left:334.50px;width:600px;text-align:center;top:318.15px;height:14.60px;line-height:14.60px;font-size:7.3px;color:#e0e0e0;font-weight:normal;font-style:normal;">Yes</div>
<div class="t s" style="left:363.70px;width:600px;text-align:center;top:318.15px;height:14.60px;line-height:14.60px;font-size:7.3px;color:#f0e6e2;font-weight:normal;font-style:normal;">Yes</div>
<div class="a" style="left:591.00px;top:331.00px;width:28.00px;height:10.00px;background:#a6a6a6;"></div>
<div class="t s" style="left:275.70px;width:600px;text-align:center;top:329.63px;height:14.60px;line-height:14.60px;font-size:7.3px;color:#e0e0e0;font-weight:normal;font-style:normal;">6</div>
<div class="t s" style="left:18.00px;width:600px;text-align:right;top:328.64px;height:16.60px;line-height:16.60px;font-size:8.3px;color:#fafafa;font-weight:normal;font-style:normal;">4800</div>
<div class="t s" style="left:334.50px;width:600px;text-align:center;top:329.63px;height:14.60px;line-height:14.60px;font-size:7.3px;color:#e0e0e0;font-weight:normal;font-style:normal;">Yes</div>
<div class="t s" style="left:363.70px;width:600px;text-align:center;top:329.63px;height:14.60px;line-height:14.60px;font-size:7.3px;color:#f0e6e2;font-weight:normal;font-style:normal;">Yes</div>
<div class="t s" style="left:511.20px;width:600px;text-align:center;top:251.87px;height:13.80px;line-height:13.80px;font-size:6.9px;color:#e6e6e6;font-weight:normal;font-style:normal;">Total</div>
<div class="t s" style="left:511.20px;width:600px;text-align:center;top:260.77px;height:13.80px;line-height:13.80px;font-size:6.9px;color:#e6e6e6;font-weight:normal;font-style:normal;">Units</div>
<div class="t s" style="left:570.00px;width:600px;text-align:center;top:261.67px;height:13.80px;line-height:13.80px;font-size:6.9px;color:#e6e6e6;font-weight:normal;font-style:normal;">Unit Cost</div>
<div class="t s" style="left:643.00px;width:600px;text-align:center;top:261.67px;height:13.80px;line-height:13.80px;font-size:6.9px;color:#e6e6e6;font-weight:normal;font-style:normal;">Tot Cost</div>
<div class="t s" style="left:687.40px;width:600px;text-align:center;top:260.77px;height:13.80px;line-height:13.80px;font-size:6.9px;color:#e6e6e6;font-weight:normal;font-style:normal;">Opt</div>
<div class="t s" style="left:721.00px;width:600px;text-align:center;top:260.77px;height:13.80px;line-height:13.80px;font-size:6.9px;color:#e6e6e6;font-weight:normal;font-style:normal;">Waste</div>
<div class="t s" style="left:709.60px;top:272.39px;height:13.70px;line-height:13.70px;font-size:6.85px;color:#e6e6e6;font-weight:normal;font-style:normal;">Lengths Required =</div>
<div class="a" style="left:796.00px;top:274.00px;width:30.00px;height:10.00px;background:#c9a194;"></div>
<div class="t s" style="left:511.20px;width:600px;text-align:center;top:272.04px;height:14.40px;line-height:14.40px;font-size:7.2px;color:#1c1414;font-weight:bold;font-style:normal;">5</div>
<div class="t s" style="left:540.00px;width:600px;text-align:center;top:272.93px;height:13.60px;line-height:13.60px;font-size:6.8px;color:#e6e6e6;font-weight:normal;font-style:normal;">x</div>
<div class="a" style="left:855.00px;top:274.00px;width:29.00px;height:10.00px;background:#c9a194;"></div>
<div class="t s" style="left:283.30px;width:600px;text-align:right;top:272.24px;height:14.00px;line-height:14.00px;font-size:7px;color:#1c1414;font-weight:bold;font-style:normal;">£8.41</div>
<div class="t s" style="left:886.00px;top:272.34px;height:13.80px;line-height:13.80px;font-size:6.9px;color:#e6e6e6;font-weight:normal;font-style:normal;">Each</div>
<div class="a" style="left:914.00px;top:274.00px;width:58.00px;height:10.00px;background:#c9a194;"></div>
<div class="t s" style="left:643.00px;width:600px;text-align:center;top:271.25px;height:16.00px;line-height:16.00px;font-size:8px;color:#1c1414;font-weight:bold;font-style:normal;">£42.03</div>
<div class="a" style="left:1002.00px;top:274.00px;width:38.00px;height:10.00px;background:#c4a4a6;"></div>
<div class="t s" style="left:721.00px;width:600px;text-align:center;top:272.04px;height:14.40px;line-height:14.40px;font-size:7.2px;color:#1c1414;font-weight:bold;font-style:normal;">20.11%</div>
<div class="t s" style="left:709.60px;top:283.72px;height:13.70px;line-height:13.70px;font-size:6.85px;color:#e6e6e6;font-weight:normal;font-style:normal;">Lengths Required =</div>
<div class="a" style="left:796.00px;top:285.00px;width:30.00px;height:10.00px;background:#c9a194;"></div>
<div class="t s" style="left:511.20px;width:600px;text-align:center;top:283.37px;height:14.40px;line-height:14.40px;font-size:7.2px;color:#1c1414;font-weight:bold;font-style:normal;">4</div>
<div class="t s" style="left:540.00px;width:600px;text-align:center;top:284.27px;height:13.60px;line-height:13.60px;font-size:6.8px;color:#e6e6e6;font-weight:normal;font-style:normal;">x</div>
<div class="a" style="left:855.00px;top:285.00px;width:29.00px;height:10.00px;background:#c9a194;"></div>
<div class="t s" style="left:283.30px;width:600px;text-align:right;top:283.57px;height:14.00px;line-height:14.00px;font-size:7px;color:#1c1414;font-weight:bold;font-style:normal;">£11.21</div>
<div class="t s" style="left:886.00px;top:283.67px;height:13.80px;line-height:13.80px;font-size:6.9px;color:#e6e6e6;font-weight:normal;font-style:normal;">Each</div>
<div class="a" style="left:914.00px;top:285.00px;width:58.00px;height:10.00px;background:#c9a194;"></div>
<div class="t s" style="left:643.00px;width:600px;text-align:center;top:282.58px;height:16.00px;line-height:16.00px;font-size:8px;color:#1c1414;font-weight:bold;font-style:normal;">£44.83</div>
<div class="a" style="left:1002.00px;top:285.00px;width:38.00px;height:10.00px;background:#c4a4a6;"></div>
<div class="t s" style="left:721.00px;width:600px;text-align:center;top:283.37px;height:14.40px;line-height:14.40px;font-size:7.2px;color:#1c1414;font-weight:bold;font-style:normal;">25.10%</div>
<div class="t s" style="left:709.60px;top:295.05px;height:13.70px;line-height:13.70px;font-size:6.85px;color:#e6e6e6;font-weight:normal;font-style:normal;">Lengths Required =</div>
<div class="a" style="left:796.00px;top:296.00px;width:30.00px;height:11.00px;background:#c9a194;"></div>
<div class="t s" style="left:511.20px;width:600px;text-align:center;top:294.71px;height:14.40px;line-height:14.40px;font-size:7.2px;color:#1c1414;font-weight:bold;font-style:normal;">3</div>
<div class="t s" style="left:540.00px;width:600px;text-align:center;top:295.60px;height:13.60px;line-height:13.60px;font-size:6.8px;color:#e6e6e6;font-weight:normal;font-style:normal;">x</div>
<div class="a" style="left:855.00px;top:296.00px;width:29.00px;height:11.00px;background:#c9a194;"></div>
<div class="t s" style="left:283.30px;width:600px;text-align:right;top:294.90px;height:14.00px;line-height:14.00px;font-size:7px;color:#1c1414;font-weight:bold;font-style:normal;">£14.01</div>
<div class="t s" style="left:886.00px;top:295.00px;height:13.80px;line-height:13.80px;font-size:6.9px;color:#e6e6e6;font-weight:normal;font-style:normal;">Each</div>
<div class="a" style="left:914.00px;top:296.00px;width:58.00px;height:11.00px;background:#c9a194;"></div>
<div class="t s" style="left:643.00px;width:600px;text-align:center;top:293.91px;height:16.00px;line-height:16.00px;font-size:8px;color:#1c1414;font-weight:bold;font-style:normal;">£42.03</div>
<div class="a" style="left:1002.00px;top:296.00px;width:38.00px;height:11.00px;background:#c4a4a6;"></div>
<div class="t s" style="left:721.00px;width:600px;text-align:center;top:294.71px;height:14.40px;line-height:14.40px;font-size:7.2px;color:#1c1414;font-weight:bold;font-style:normal;">20.11%</div>
<div class="t s" style="left:709.60px;top:306.39px;height:13.70px;line-height:13.70px;font-size:6.85px;color:#e6e6e6;font-weight:normal;font-style:normal;">Lengths Required =</div>
<div class="a" style="left:796.00px;top:308.00px;width:30.00px;height:10.00px;background:#c9a194;"></div>
<div class="t s" style="left:511.20px;width:600px;text-align:center;top:306.04px;height:14.40px;line-height:14.40px;font-size:7.2px;color:#1c1414;font-weight:bold;font-style:normal;">3</div>
<div class="t s" style="left:540.00px;width:600px;text-align:center;top:306.93px;height:13.60px;line-height:13.60px;font-size:6.8px;color:#e6e6e6;font-weight:normal;font-style:normal;">x</div>
<div class="a" style="left:855.00px;top:308.00px;width:29.00px;height:10.00px;background:#c9a194;"></div>
<div class="t s" style="left:283.30px;width:600px;text-align:right;top:306.24px;height:14.00px;line-height:14.00px;font-size:7px;color:#1c1414;font-weight:bold;font-style:normal;">£16.81</div>
<div class="t s" style="left:886.00px;top:306.34px;height:13.80px;line-height:13.80px;font-size:6.9px;color:#e6e6e6;font-weight:normal;font-style:normal;">Each</div>
<div class="a" style="left:914.00px;top:308.00px;width:58.00px;height:10.00px;background:#c9a194;"></div>
<div class="t s" style="left:643.00px;width:600px;text-align:center;top:305.25px;height:16.00px;line-height:16.00px;font-size:8px;color:#1c1414;font-weight:bold;font-style:normal;">£50.44</div>
<div class="a" style="left:1002.00px;top:308.00px;width:38.00px;height:10.00px;background:#c4a4a6;"></div>
<div class="t s" style="left:721.00px;width:600px;text-align:center;top:306.04px;height:14.40px;line-height:14.40px;font-size:7.2px;color:#1c1414;font-weight:bold;font-style:normal;">33.43%</div>
<div class="t s" style="left:709.60px;top:317.72px;height:13.70px;line-height:13.70px;font-size:6.85px;color:#e6e6e6;font-weight:normal;font-style:normal;">Lengths Required =</div>
<div class="a" style="left:796.00px;top:319.00px;width:30.00px;height:10.00px;background:#c9a194;"></div>
<div class="t s" style="left:511.20px;width:600px;text-align:center;top:317.37px;height:14.40px;line-height:14.40px;font-size:7.2px;color:#1c1414;font-weight:bold;font-style:normal;">2</div>
<div class="t s" style="left:540.00px;width:600px;text-align:center;top:318.27px;height:13.60px;line-height:13.60px;font-size:6.8px;color:#e6e6e6;font-weight:normal;font-style:normal;">x</div>
<div class="a" style="left:855.00px;top:319.00px;width:29.00px;height:10.00px;background:#c9a194;"></div>
<div class="t s" style="left:283.30px;width:600px;text-align:right;top:317.57px;height:14.00px;line-height:14.00px;font-size:7px;color:#1c1414;font-weight:bold;font-style:normal;">£19.61</div>
<div class="t s" style="left:886.00px;top:317.67px;height:13.80px;line-height:13.80px;font-size:6.9px;color:#e6e6e6;font-weight:normal;font-style:normal;">Each</div>
<div class="a" style="left:914.00px;top:319.00px;width:58.00px;height:10.00px;background:#c9a194;"></div>
<div class="t s" style="left:643.00px;width:600px;text-align:center;top:316.58px;height:16.00px;line-height:16.00px;font-size:8px;color:#1c1414;font-weight:bold;font-style:normal;">£39.23</div>
<div class="a" style="left:1002.00px;top:319.00px;width:38.00px;height:10.00px;background:#c4a4a6;"></div>
<div class="t s" style="left:721.00px;width:600px;text-align:center;top:317.37px;height:14.40px;line-height:14.40px;font-size:7.2px;color:#1c1414;font-weight:bold;font-style:normal;">14.40%</div>
<div class="t s" style="left:709.60px;top:329.05px;height:13.70px;line-height:13.70px;font-size:6.85px;color:#e6e6e6;font-weight:normal;font-style:normal;">Lengths Required =</div>
<div class="a" style="left:796.00px;top:330.00px;width:30.00px;height:11.00px;background:#c9a194;"></div>
<div class="t s" style="left:511.20px;width:600px;text-align:center;top:328.71px;height:14.40px;line-height:14.40px;font-size:7.2px;color:#1c1414;font-weight:bold;font-style:normal;">2</div>
<div class="t s" style="left:540.00px;width:600px;text-align:center;top:329.60px;height:13.60px;line-height:13.60px;font-size:6.8px;color:#e6e6e6;font-weight:normal;font-style:normal;">x</div>
<div class="a" style="left:855.00px;top:330.00px;width:29.00px;height:11.00px;background:#c9a194;"></div>
<div class="t s" style="left:283.30px;width:600px;text-align:right;top:328.90px;height:14.00px;line-height:14.00px;font-size:7px;color:#1c1414;font-weight:bold;font-style:normal;">£22.42</div>
<div class="t s" style="left:886.00px;top:329.00px;height:13.80px;line-height:13.80px;font-size:6.9px;color:#e6e6e6;font-weight:normal;font-style:normal;">Each</div>
<div class="a" style="left:914.00px;top:330.00px;width:58.00px;height:11.00px;background:#c9a194;"></div>
<div class="t s" style="left:643.00px;width:600px;text-align:center;top:327.91px;height:16.00px;line-height:16.00px;font-size:8px;color:#1c1414;font-weight:bold;font-style:normal;">£44.83</div>
<div class="a" style="left:1002.00px;top:330.00px;width:38.00px;height:11.00px;background:#c4a4a6;"></div>
<div class="t s" style="left:721.00px;width:600px;text-align:center;top:328.71px;height:14.40px;line-height:14.40px;font-size:7.2px;color:#1c1414;font-weight:bold;font-style:normal;">25.10%</div>
<div class="t s" style="left:687.40px;width:600px;text-align:center;top:317.77px;height:14.00px;line-height:14.00px;font-size:7px;color:#8fc35a;font-weight:normal;font-style:normal;">Yes</div>
<div class="t s" style="left:37.90px;top:345.33px;height:15.70px;line-height:15.70px;font-size:7.85px;color:#e8e8e8;font-weight:normal;font-style:normal;">Required Cut Pieces</div>
<div class="t s" style="left:-246.00px;width:600px;text-align:center;top:357.88px;height:15.60px;line-height:15.60px;font-size:7.8px;color:#d8d8d8;font-weight:normal;font-style:normal;">Quantity</div>
<div class="t s" style="left:-246.00px;width:600px;text-align:center;top:367.73px;height:15.60px;line-height:15.60px;font-size:7.8px;color:#d8d8d8;font-weight:normal;font-style:normal;">(Enter)</div>
<div class="t s" style="left:-246.00px;width:600px;text-align:center;top:377.58px;height:15.60px;line-height:15.60px;font-size:7.8px;color:#d8d8d8;font-weight:normal;font-style:normal;">Number</div>
<div class="t s" style="left:-208.00px;width:600px;text-align:center;top:357.88px;height:15.60px;line-height:15.60px;font-size:7.8px;color:#d8d8d8;font-weight:normal;font-style:normal;">Length</div>
<div class="t s" style="left:-208.00px;width:600px;text-align:center;top:367.73px;height:15.60px;line-height:15.60px;font-size:7.8px;color:#d8d8d8;font-weight:normal;font-style:normal;">(Enter)</div>
<div class="t s" style="left:-208.00px;width:600px;text-align:center;top:377.58px;height:15.60px;line-height:15.60px;font-size:7.8px;color:#d8d8d8;font-weight:normal;font-style:normal;">mm</div>
<div class="t s" style="left:-133.00px;width:600px;text-align:center;top:364.27px;height:13.80px;line-height:13.80px;font-size:6.9px;color:#bdbdbd;font-weight:normal;font-style:normal;">Piece</div>
<div class="t s" style="left:-133.00px;width:600px;text-align:center;top:372.57px;height:13.80px;line-height:13.80px;font-size:6.9px;color:#bdbdbd;font-weight:normal;font-style:normal;">Ref:</div>
<div class="t s" style="left:180.80px;top:345.28px;height:17.42px;line-height:17.42px;font-size:8.71px;color:#f0f0f0;font-weight:normal;font-style:normal;">Optimised Cuts for item [A1] Softwood Timber 70mm(Fin) x 70mm(Fin) - [Nominal 75 x 75 or 3&quot; x 3&quot;] [2 x 4200mm Lengths] [14.4% Waste Incuding Kerf]</div>
<div class="t s" style="left:400.40px;width:600px;text-align:right;top:345.52px;height:17.14px;line-height:17.14px;font-size:8.57px;color:#f0f0f0;font-weight:normal;font-style:normal;">Use - Unhide columns if needed --&gt;</div>
<div class="a" style="left:1002.00px;top:346.00px;width:38.00px;height:14.00px;background:#c4a4a6;"></div>
<div class="t s" style="left:721.00px;width:600px;text-align:center;top:346.17px;height:14.20px;line-height:14.20px;font-size:7.1px;color:#1c1414;font-weight:bold;font-style:normal;">14.40%</div>
<div class="a" style="left:1002.00px;top:360.00px;width:38.00px;height:30.00px;background:#5a5555;"></div>
<div class="t s" style="left:721.00px;width:600px;text-align:center;top:364.47px;height:13.60px;line-height:13.60px;font-size:6.8px;color:#c8c8c8;font-weight:normal;font-style:normal;">[Waste Inc</div>
<div class="t s" style="left:721.00px;width:600px;text-align:center;top:373.27px;height:13.60px;line-height:13.60px;font-size:6.8px;color:#c8c8c8;font-weight:normal;font-style:normal;">Kerf]</div>
<div class="a" style="left:179.00px;top:360.00px;width:823.00px;height:30.00px;background:#000;"></div>
<div class="t s" style="left:-106.00px;width:600px;text-align:center;top:368.05px;height:13.84px;line-height:13.84px;font-size:6.92px;color:#f5f5f5;font-weight:bold;font-style:normal;">Cut [1]</div>
<div class="t s" style="left:-76.60px;width:600px;text-align:center;top:368.05px;height:13.84px;line-height:13.84px;font-size:6.92px;color:#f5f5f5;font-weight:bold;font-style:normal;">Cut [2]</div>
<div class="t s" style="left:-47.20px;width:600px;text-align:center;top:368.05px;height:13.84px;line-height:13.84px;font-size:6.92px;color:#f5f5f5;font-weight:bold;font-style:normal;">Cut [3]</div>
<div class="t s" style="left:-17.80px;width:600px;text-align:center;top:368.05px;height:13.84px;line-height:13.84px;font-size:6.92px;color:#f5f5f5;font-weight:bold;font-style:normal;">Cut [4]</div>
<div class="t s" style="left:11.60px;width:600px;text-align:center;top:368.05px;height:13.84px;line-height:13.84px;font-size:6.92px;color:#f5f5f5;font-weight:bold;font-style:normal;">Cut [5]</div>
<div class="t s" style="left:41.00px;width:600px;text-align:center;top:368.05px;height:13.84px;line-height:13.84px;font-size:6.92px;color:#f5f5f5;font-weight:bold;font-style:normal;">Cut [6]</div>
<div class="t s" style="left:70.40px;width:600px;text-align:center;top:368.05px;height:13.84px;line-height:13.84px;font-size:6.92px;color:#f5f5f5;font-weight:bold;font-style:normal;">Cut [7]</div>
<div class="t s" style="left:99.80px;width:600px;text-align:center;top:368.05px;height:13.84px;line-height:13.84px;font-size:6.92px;color:#f5f5f5;font-weight:bold;font-style:normal;">Cut [8]</div>
<div class="t s" style="left:129.20px;width:600px;text-align:center;top:368.05px;height:13.84px;line-height:13.84px;font-size:6.92px;color:#f5f5f5;font-weight:bold;font-style:normal;">Cut [9]</div>
<div class="t s" style="left:158.60px;width:600px;text-align:center;top:368.05px;height:13.84px;line-height:13.84px;font-size:6.92px;color:#f5f5f5;font-weight:bold;font-style:normal;">Cut [10]</div>
<div class="t s" style="left:188.00px;width:600px;text-align:center;top:368.05px;height:13.84px;line-height:13.84px;font-size:6.92px;color:#f5f5f5;font-weight:bold;font-style:normal;">Cut [11]</div>
<div class="t s" style="left:217.40px;width:600px;text-align:center;top:368.05px;height:13.84px;line-height:13.84px;font-size:6.92px;color:#f5f5f5;font-weight:bold;font-style:normal;">Cut [12]</div>
<div class="t s" style="left:246.80px;width:600px;text-align:center;top:368.05px;height:13.84px;line-height:13.84px;font-size:6.92px;color:#f5f5f5;font-weight:bold;font-style:normal;">Cut [13]</div>
<div class="t s" style="left:276.20px;width:600px;text-align:center;top:368.05px;height:13.84px;line-height:13.84px;font-size:6.92px;color:#f5f5f5;font-weight:bold;font-style:normal;">Cut [14]</div>
<div class="t s" style="left:305.60px;width:600px;text-align:center;top:368.05px;height:13.84px;line-height:13.84px;font-size:6.92px;color:#f5f5f5;font-weight:bold;font-style:normal;">Cut [15]</div>
<div class="t s" style="left:335.00px;width:600px;text-align:center;top:368.05px;height:13.84px;line-height:13.84px;font-size:6.92px;color:#f5f5f5;font-weight:bold;font-style:normal;">Cut [16]</div>
<div class="t s" style="left:364.40px;width:600px;text-align:center;top:368.05px;height:13.84px;line-height:13.84px;font-size:6.92px;color:#f5f5f5;font-weight:bold;font-style:normal;">Cut [17]</div>
<div class="t s" style="left:393.80px;width:600px;text-align:center;top:368.05px;height:13.84px;line-height:13.84px;font-size:6.92px;color:#f5f5f5;font-weight:bold;font-style:normal;">Cut [18]</div>
<div class="t s" style="left:423.20px;width:600px;text-align:center;top:368.05px;height:13.84px;line-height:13.84px;font-size:6.92px;color:#f5f5f5;font-weight:bold;font-style:normal;">Cut [19]</div>
<div class="t s" style="left:452.60px;width:600px;text-align:center;top:368.05px;height:13.84px;line-height:13.84px;font-size:6.92px;color:#f5f5f5;font-weight:bold;font-style:normal;">Cut [20]</div>
<div class="t s" style="left:482.00px;width:600px;text-align:center;top:368.05px;height:13.84px;line-height:13.84px;font-size:6.92px;color:#f5f5f5;font-weight:bold;font-style:normal;">Cut [21]</div>
<div class="t s" style="left:511.40px;width:600px;text-align:center;top:368.05px;height:13.84px;line-height:13.84px;font-size:6.92px;color:#f5f5f5;font-weight:bold;font-style:normal;">Cut [22]</div>
<div class="t s" style="left:540.80px;width:600px;text-align:center;top:368.05px;height:13.84px;line-height:13.84px;font-size:6.92px;color:#f5f5f5;font-weight:bold;font-style:normal;">Cut [23]</div>
<div class="t s" style="left:570.20px;width:600px;text-align:center;top:368.05px;height:13.84px;line-height:13.84px;font-size:6.92px;color:#f5f5f5;font-weight:bold;font-style:normal;">Cut [24]</div>
<div class="t s" style="left:599.60px;width:600px;text-align:center;top:368.05px;height:13.84px;line-height:13.84px;font-size:6.92px;color:#f5f5f5;font-weight:bold;font-style:normal;">Cut [25]</div>
<div class="t s" style="left:629.00px;width:600px;text-align:center;top:368.05px;height:13.84px;line-height:13.84px;font-size:6.92px;color:#f5f5f5;font-weight:bold;font-style:normal;">Cut [26]</div>
<div class="t s" style="left:658.40px;width:600px;text-align:center;top:368.05px;height:13.84px;line-height:13.84px;font-size:6.92px;color:#f5f5f5;font-weight:bold;font-style:normal;">Cut [27]</div>
<div class="t s" style="left:687.80px;width:600px;text-align:center;top:368.05px;height:13.84px;line-height:13.84px;font-size:6.92px;color:#f5f5f5;font-weight:bold;font-style:normal;">Cut [28]</div>
<div class="a" style="left:36.00px;top:390.00px;width:76.00px;height:141.00px;background:#3a3434;"></div>
<div class="a" style="left:154.00px;top:390.00px;width:25.00px;height:141.00px;background:#3a3434;"></div>
<div class="a" style="left:179.00px;top:390.00px;width:861.00px;height:141.00px;background:#333;"></div>
<div class="a" style="left:36.00px;top:391.00px;width:36.00px;height:10.00px;background:#e7dedd;"></div>
<div class="a" style="left:73.00px;top:391.00px;width:39.00px;height:10.00px;background:#e7dedd;"></div>
<div class="t s" style="left:-169.50px;width:600px;text-align:center;top:389.42px;height:13.30px;line-height:13.30px;font-size:6.65px;color:#d0d0d0;font-weight:normal;font-style:normal;">Ok</div>
<div class="a" style="left:154.00px;top:391.00px;width:25.00px;height:10.00px;background:#a7a3a3;"></div>
<div class="a" style="left:180.00px;top:391.00px;width:29.00px;height:10.00px;background:#a6a6a6;"></div>
<div class="a" style="left:210.00px;top:391.00px;width:28.00px;height:10.00px;background:#a6a6a6;"></div>
<div class="a" style="left:239.00px;top:391.00px;width:29.00px;height:10.00px;background:#a6a6a6;"></div>
<div class="a" style="left:269.00px;top:391.00px;width:28.00px;height:10.00px;background:#a6a6a6;"></div>
<div class="a" style="left:298.00px;top:391.00px;width:28.00px;height:10.00px;background:#a6a6a6;"></div>
<div class="a" style="left:327.00px;top:391.00px;width:29.00px;height:10.00px;background:#a6a6a6;"></div>
<div class="a" style="left:357.00px;top:391.00px;width:28.00px;height:10.00px;background:#a6a6a6;"></div>
<div class="a" style="left:386.00px;top:391.00px;width:28.00px;height:10.00px;background:#a6a6a6;"></div>
<div class="a" style="left:415.00px;top:391.00px;width:29.00px;height:10.00px;background:#a6a6a6;"></div>
<div class="a" style="left:445.00px;top:391.00px;width:28.00px;height:10.00px;background:#a6a6a6;"></div>
<div class="a" style="left:474.00px;top:391.00px;width:29.00px;height:10.00px;background:#a6a6a6;"></div>
<div class="a" style="left:504.00px;top:391.00px;width:28.00px;height:10.00px;background:#a6a6a6;"></div>
<div class="a" style="left:533.00px;top:391.00px;width:29.00px;height:10.00px;background:#a6a6a6;"></div>
<div class="a" style="left:563.00px;top:391.00px;width:28.00px;height:10.00px;background:#a6a6a6;"></div>
<div class="a" style="left:592.00px;top:391.00px;width:28.00px;height:10.00px;background:#a6a6a6;"></div>
<div class="a" style="left:621.00px;top:391.00px;width:29.00px;height:10.00px;background:#a6a6a6;"></div>
<div class="a" style="left:651.00px;top:391.00px;width:28.00px;height:10.00px;background:#a6a6a6;"></div>
<div class="a" style="left:680.00px;top:391.00px;width:28.00px;height:10.00px;background:#a6a6a6;"></div>
<div class="a" style="left:709.00px;top:391.00px;width:29.00px;height:10.00px;background:#a6a6a6;"></div>
<div class="a" style="left:739.00px;top:391.00px;width:28.00px;height:10.00px;background:#a6a6a6;"></div>
<div class="a" style="left:768.00px;top:391.00px;width:29.00px;height:10.00px;background:#a6a6a6;"></div>
<div class="a" style="left:798.00px;top:391.00px;width:28.00px;height:10.00px;background:#a6a6a6;"></div>
<div class="a" style="left:827.00px;top:391.00px;width:29.00px;height:10.00px;background:#a6a6a6;"></div>
<div class="a" style="left:857.00px;top:391.00px;width:28.00px;height:10.00px;background:#a6a6a6;"></div>
<div class="a" style="left:886.00px;top:391.00px;width:28.00px;height:10.00px;background:#a6a6a6;"></div>
<div class="a" style="left:915.00px;top:391.00px;width:29.00px;height:10.00px;background:#a6a6a6;"></div>
<div class="a" style="left:945.00px;top:391.00px;width:28.00px;height:10.00px;background:#a6a6a6;"></div>
<div class="a" style="left:974.00px;top:391.00px;width:28.00px;height:10.00px;background:#a6a6a6;"></div>
<div class="a" style="left:1003.00px;top:391.00px;width:37.00px;height:10.00px;background:#a6a6a6;"></div>
<div class="a" style="left:36.00px;top:402.00px;width:36.00px;height:11.00px;background:#e7dedd;"></div>
<div class="a" style="left:73.00px;top:402.00px;width:39.00px;height:11.00px;background:#e7dedd;"></div>
<div class="t s" style="left:-169.50px;width:600px;text-align:center;top:400.92px;height:13.30px;line-height:13.30px;font-size:6.65px;color:#d0d0d0;font-weight:normal;font-style:normal;">Ok</div>
<div class="a" style="left:154.00px;top:402.00px;width:25.00px;height:11.00px;background:#a7a3a3;"></div>
<div class="a" style="left:180.00px;top:402.00px;width:29.00px;height:11.00px;background:#a6a6a6;"></div>
<div class="a" style="left:210.00px;top:402.00px;width:28.00px;height:11.00px;background:#a6a6a6;"></div>
<div class="a" style="left:239.00px;top:402.00px;width:29.00px;height:11.00px;background:#a6a6a6;"></div>
<div class="a" style="left:269.00px;top:402.00px;width:28.00px;height:11.00px;background:#a6a6a6;"></div>
<div class="a" style="left:298.00px;top:402.00px;width:28.00px;height:11.00px;background:#a6a6a6;"></div>
<div class="a" style="left:327.00px;top:402.00px;width:29.00px;height:11.00px;background:#a6a6a6;"></div>
<div class="a" style="left:357.00px;top:402.00px;width:28.00px;height:11.00px;background:#a6a6a6;"></div>
<div class="a" style="left:386.00px;top:402.00px;width:28.00px;height:11.00px;background:#a6a6a6;"></div>
<div class="a" style="left:415.00px;top:402.00px;width:29.00px;height:11.00px;background:#a6a6a6;"></div>
<div class="a" style="left:445.00px;top:402.00px;width:28.00px;height:11.00px;background:#a6a6a6;"></div>
<div class="a" style="left:474.00px;top:402.00px;width:29.00px;height:11.00px;background:#a6a6a6;"></div>
<div class="a" style="left:504.00px;top:402.00px;width:28.00px;height:11.00px;background:#a6a6a6;"></div>
<div class="a" style="left:533.00px;top:402.00px;width:29.00px;height:11.00px;background:#a6a6a6;"></div>
<div class="a" style="left:563.00px;top:402.00px;width:28.00px;height:11.00px;background:#a6a6a6;"></div>
<div class="a" style="left:592.00px;top:402.00px;width:28.00px;height:11.00px;background:#a6a6a6;"></div>
<div class="a" style="left:621.00px;top:402.00px;width:29.00px;height:11.00px;background:#a6a6a6;"></div>
<div class="a" style="left:651.00px;top:402.00px;width:28.00px;height:11.00px;background:#a6a6a6;"></div>
<div class="a" style="left:680.00px;top:402.00px;width:28.00px;height:11.00px;background:#a6a6a6;"></div>
<div class="a" style="left:709.00px;top:402.00px;width:29.00px;height:11.00px;background:#a6a6a6;"></div>
<div class="a" style="left:739.00px;top:402.00px;width:28.00px;height:11.00px;background:#a6a6a6;"></div>
<div class="a" style="left:768.00px;top:402.00px;width:29.00px;height:11.00px;background:#a6a6a6;"></div>
<div class="a" style="left:798.00px;top:402.00px;width:28.00px;height:11.00px;background:#a6a6a6;"></div>
<div class="a" style="left:827.00px;top:402.00px;width:29.00px;height:11.00px;background:#a6a6a6;"></div>
<div class="a" style="left:857.00px;top:402.00px;width:28.00px;height:11.00px;background:#a6a6a6;"></div>
<div class="a" style="left:886.00px;top:402.00px;width:28.00px;height:11.00px;background:#a6a6a6;"></div>
<div class="a" style="left:915.00px;top:402.00px;width:29.00px;height:11.00px;background:#a6a6a6;"></div>
<div class="a" style="left:945.00px;top:402.00px;width:28.00px;height:11.00px;background:#a6a6a6;"></div>
<div class="a" style="left:974.00px;top:402.00px;width:28.00px;height:11.00px;background:#a6a6a6;"></div>
<div class="a" style="left:1003.00px;top:402.00px;width:37.00px;height:11.00px;background:#a6a6a6;"></div>
<div class="a" style="left:36.00px;top:414.00px;width:36.00px;height:10.00px;background:#e7dedd;"></div>
<div class="a" style="left:73.00px;top:414.00px;width:39.00px;height:10.00px;background:#e7dedd;"></div>
<div class="t s" style="left:-169.50px;width:600px;text-align:center;top:412.42px;height:13.30px;line-height:13.30px;font-size:6.65px;color:#d0d0d0;font-weight:normal;font-style:normal;">Ok</div>
<div class="a" style="left:154.00px;top:414.00px;width:25.00px;height:10.00px;background:#a7a3a3;"></div>
<div class="a" style="left:180.00px;top:414.00px;width:29.00px;height:10.00px;background:#a6a6a6;"></div>
<div class="a" style="left:210.00px;top:414.00px;width:28.00px;height:10.00px;background:#a6a6a6;"></div>
<div class="a" style="left:239.00px;top:414.00px;width:29.00px;height:10.00px;background:#a6a6a6;"></div>
<div class="a" style="left:269.00px;top:414.00px;width:28.00px;height:10.00px;background:#a6a6a6;"></div>
<div class="a" style="left:298.00px;top:414.00px;width:28.00px;height:10.00px;background:#a6a6a6;"></div>
<div class="a" style="left:327.00px;top:414.00px;width:29.00px;height:10.00px;background:#a6a6a6;"></div>
<div class="a" style="left:357.00px;top:414.00px;width:28.00px;height:10.00px;background:#a6a6a6;"></div>
<div class="a" style="left:386.00px;top:414.00px;width:28.00px;height:10.00px;background:#a6a6a6;"></div>
<div class="a" style="left:415.00px;top:414.00px;width:29.00px;height:10.00px;background:#a6a6a6;"></div>
<div class="a" style="left:445.00px;top:414.00px;width:28.00px;height:10.00px;background:#a6a6a6;"></div>
<div class="a" style="left:474.00px;top:414.00px;width:29.00px;height:10.00px;background:#a6a6a6;"></div>
<div class="a" style="left:504.00px;top:414.00px;width:28.00px;height:10.00px;background:#a6a6a6;"></div>
<div class="a" style="left:533.00px;top:414.00px;width:29.00px;height:10.00px;background:#a6a6a6;"></div>
<div class="a" style="left:563.00px;top:414.00px;width:28.00px;height:10.00px;background:#a6a6a6;"></div>
<div class="a" style="left:592.00px;top:414.00px;width:28.00px;height:10.00px;background:#a6a6a6;"></div>
<div class="a" style="left:621.00px;top:414.00px;width:29.00px;height:10.00px;background:#a6a6a6;"></div>
<div class="a" style="left:651.00px;top:414.00px;width:28.00px;height:10.00px;background:#a6a6a6;"></div>
<div class="a" style="left:680.00px;top:414.00px;width:28.00px;height:10.00px;background:#a6a6a6;"></div>
<div class="a" style="left:709.00px;top:414.00px;width:29.00px;height:10.00px;background:#a6a6a6;"></div>
<div class="a" style="left:739.00px;top:414.00px;width:28.00px;height:10.00px;background:#a6a6a6;"></div>
<div class="a" style="left:768.00px;top:414.00px;width:29.00px;height:10.00px;background:#a6a6a6;"></div>
<div class="a" style="left:798.00px;top:414.00px;width:28.00px;height:10.00px;background:#a6a6a6;"></div>
<div class="a" style="left:827.00px;top:414.00px;width:29.00px;height:10.00px;background:#a6a6a6;"></div>
<div class="a" style="left:857.00px;top:414.00px;width:28.00px;height:10.00px;background:#a6a6a6;"></div>
<div class="a" style="left:886.00px;top:414.00px;width:28.00px;height:10.00px;background:#a6a6a6;"></div>
<div class="a" style="left:915.00px;top:414.00px;width:29.00px;height:10.00px;background:#a6a6a6;"></div>
<div class="a" style="left:945.00px;top:414.00px;width:28.00px;height:10.00px;background:#a6a6a6;"></div>
<div class="a" style="left:974.00px;top:414.00px;width:28.00px;height:10.00px;background:#a6a6a6;"></div>
<div class="a" style="left:1003.00px;top:414.00px;width:37.00px;height:10.00px;background:#a6a6a6;"></div>
<div class="a" style="left:36.00px;top:425.00px;width:36.00px;height:11.00px;background:#e7dedd;"></div>
<div class="a" style="left:73.00px;top:425.00px;width:39.00px;height:11.00px;background:#e7dedd;"></div>
<div class="t s" style="left:-169.50px;width:600px;text-align:center;top:423.92px;height:13.30px;line-height:13.30px;font-size:6.65px;color:#d0d0d0;font-weight:normal;font-style:normal;">Ok</div>
<div class="a" style="left:154.00px;top:425.00px;width:25.00px;height:11.00px;background:#a7a3a3;"></div>
<div class="a" style="left:180.00px;top:425.00px;width:29.00px;height:11.00px;background:#a6a6a6;"></div>
<div class="a" style="left:210.00px;top:425.00px;width:28.00px;height:11.00px;background:#a6a6a6;"></div>
<div class="a" style="left:239.00px;top:425.00px;width:29.00px;height:11.00px;background:#a6a6a6;"></div>
<div class="a" style="left:269.00px;top:425.00px;width:28.00px;height:11.00px;background:#a6a6a6;"></div>
<div class="a" style="left:298.00px;top:425.00px;width:28.00px;height:11.00px;background:#a6a6a6;"></div>
<div class="a" style="left:327.00px;top:425.00px;width:29.00px;height:11.00px;background:#a6a6a6;"></div>
<div class="a" style="left:357.00px;top:425.00px;width:28.00px;height:11.00px;background:#a6a6a6;"></div>
<div class="a" style="left:386.00px;top:425.00px;width:28.00px;height:11.00px;background:#a6a6a6;"></div>
<div class="a" style="left:415.00px;top:425.00px;width:29.00px;height:11.00px;background:#a6a6a6;"></div>
<div class="a" style="left:445.00px;top:425.00px;width:28.00px;height:11.00px;background:#a6a6a6;"></div>
<div class="a" style="left:474.00px;top:425.00px;width:29.00px;height:11.00px;background:#a6a6a6;"></div>
<div class="a" style="left:504.00px;top:425.00px;width:28.00px;height:11.00px;background:#a6a6a6;"></div>
<div class="a" style="left:533.00px;top:425.00px;width:29.00px;height:11.00px;background:#a6a6a6;"></div>
<div class="a" style="left:563.00px;top:425.00px;width:28.00px;height:11.00px;background:#a6a6a6;"></div>
<div class="a" style="left:592.00px;top:425.00px;width:28.00px;height:11.00px;background:#a6a6a6;"></div>
<div class="a" style="left:621.00px;top:425.00px;width:29.00px;height:11.00px;background:#a6a6a6;"></div>
<div class="a" style="left:651.00px;top:425.00px;width:28.00px;height:11.00px;background:#a6a6a6;"></div>
<div class="a" style="left:680.00px;top:425.00px;width:28.00px;height:11.00px;background:#a6a6a6;"></div>
<div class="a" style="left:709.00px;top:425.00px;width:29.00px;height:11.00px;background:#a6a6a6;"></div>
<div class="a" style="left:739.00px;top:425.00px;width:28.00px;height:11.00px;background:#a6a6a6;"></div>
<div class="a" style="left:768.00px;top:425.00px;width:29.00px;height:11.00px;background:#a6a6a6;"></div>
<div class="a" style="left:798.00px;top:425.00px;width:28.00px;height:11.00px;background:#a6a6a6;"></div>
<div class="a" style="left:827.00px;top:425.00px;width:29.00px;height:11.00px;background:#a6a6a6;"></div>
<div class="a" style="left:857.00px;top:425.00px;width:28.00px;height:11.00px;background:#a6a6a6;"></div>
<div class="a" style="left:886.00px;top:425.00px;width:28.00px;height:11.00px;background:#a6a6a6;"></div>
<div class="a" style="left:915.00px;top:425.00px;width:29.00px;height:11.00px;background:#a6a6a6;"></div>
<div class="a" style="left:945.00px;top:425.00px;width:28.00px;height:11.00px;background:#a6a6a6;"></div>
<div class="a" style="left:974.00px;top:425.00px;width:28.00px;height:11.00px;background:#a6a6a6;"></div>
<div class="a" style="left:1003.00px;top:425.00px;width:37.00px;height:11.00px;background:#a6a6a6;"></div>
<div class="a" style="left:36.00px;top:437.00px;width:36.00px;height:10.00px;background:#e7dedd;"></div>
<div class="a" style="left:73.00px;top:437.00px;width:39.00px;height:10.00px;background:#e7dedd;"></div>
<div class="t s" style="left:-169.50px;width:600px;text-align:center;top:435.42px;height:13.30px;line-height:13.30px;font-size:6.65px;color:#d0d0d0;font-weight:normal;font-style:normal;">Ok</div>
<div class="a" style="left:154.00px;top:437.00px;width:25.00px;height:10.00px;background:#a7a3a3;"></div>
<div class="a" style="left:180.00px;top:437.00px;width:29.00px;height:10.00px;background:#a6a6a6;"></div>
<div class="a" style="left:210.00px;top:437.00px;width:28.00px;height:10.00px;background:#a6a6a6;"></div>
<div class="a" style="left:239.00px;top:437.00px;width:29.00px;height:10.00px;background:#a6a6a6;"></div>
<div class="a" style="left:269.00px;top:437.00px;width:28.00px;height:10.00px;background:#a6a6a6;"></div>
<div class="a" style="left:298.00px;top:437.00px;width:28.00px;height:10.00px;background:#a6a6a6;"></div>
<div class="a" style="left:327.00px;top:437.00px;width:29.00px;height:10.00px;background:#a6a6a6;"></div>
<div class="a" style="left:357.00px;top:437.00px;width:28.00px;height:10.00px;background:#a6a6a6;"></div>
<div class="a" style="left:386.00px;top:437.00px;width:28.00px;height:10.00px;background:#a6a6a6;"></div>
<div class="a" style="left:415.00px;top:437.00px;width:29.00px;height:10.00px;background:#a6a6a6;"></div>
<div class="a" style="left:445.00px;top:437.00px;width:28.00px;height:10.00px;background:#a6a6a6;"></div>
<div class="a" style="left:474.00px;top:437.00px;width:29.00px;height:10.00px;background:#a6a6a6;"></div>
<div class="a" style="left:504.00px;top:437.00px;width:28.00px;height:10.00px;background:#a6a6a6;"></div>
<div class="a" style="left:533.00px;top:437.00px;width:29.00px;height:10.00px;background:#a6a6a6;"></div>
<div class="a" style="left:563.00px;top:437.00px;width:28.00px;height:10.00px;background:#a6a6a6;"></div>
<div class="a" style="left:592.00px;top:437.00px;width:28.00px;height:10.00px;background:#a6a6a6;"></div>
<div class="a" style="left:621.00px;top:437.00px;width:29.00px;height:10.00px;background:#a6a6a6;"></div>
<div class="a" style="left:651.00px;top:437.00px;width:28.00px;height:10.00px;background:#a6a6a6;"></div>
<div class="a" style="left:680.00px;top:437.00px;width:28.00px;height:10.00px;background:#a6a6a6;"></div>
<div class="a" style="left:709.00px;top:437.00px;width:29.00px;height:10.00px;background:#a6a6a6;"></div>
<div class="a" style="left:739.00px;top:437.00px;width:28.00px;height:10.00px;background:#a6a6a6;"></div>
<div class="a" style="left:768.00px;top:437.00px;width:29.00px;height:10.00px;background:#a6a6a6;"></div>
<div class="a" style="left:798.00px;top:437.00px;width:28.00px;height:10.00px;background:#a6a6a6;"></div>
<div class="a" style="left:827.00px;top:437.00px;width:29.00px;height:10.00px;background:#a6a6a6;"></div>
<div class="a" style="left:857.00px;top:437.00px;width:28.00px;height:10.00px;background:#a6a6a6;"></div>
<div class="a" style="left:886.00px;top:437.00px;width:28.00px;height:10.00px;background:#a6a6a6;"></div>
<div class="a" style="left:915.00px;top:437.00px;width:29.00px;height:10.00px;background:#a6a6a6;"></div>
<div class="a" style="left:945.00px;top:437.00px;width:28.00px;height:10.00px;background:#a6a6a6;"></div>
<div class="a" style="left:974.00px;top:437.00px;width:28.00px;height:10.00px;background:#a6a6a6;"></div>
<div class="a" style="left:1003.00px;top:437.00px;width:37.00px;height:10.00px;background:#a6a6a6;"></div>
<div class="a" style="left:36.00px;top:448.00px;width:36.00px;height:11.00px;background:#e7dedd;"></div>
<div class="a" style="left:73.00px;top:448.00px;width:39.00px;height:11.00px;background:#e7dedd;"></div>
<div class="t s" style="left:-169.50px;width:600px;text-align:center;top:446.92px;height:13.30px;line-height:13.30px;font-size:6.65px;color:#d0d0d0;font-weight:normal;font-style:normal;">Ok</div>
<div class="a" style="left:154.00px;top:448.00px;width:25.00px;height:11.00px;background:#a7a3a3;"></div>
<div class="a" style="left:180.00px;top:448.00px;width:29.00px;height:11.00px;background:#a6a6a6;"></div>
<div class="a" style="left:210.00px;top:448.00px;width:28.00px;height:11.00px;background:#a6a6a6;"></div>
<div class="a" style="left:239.00px;top:448.00px;width:29.00px;height:11.00px;background:#a6a6a6;"></div>
<div class="a" style="left:269.00px;top:448.00px;width:28.00px;height:11.00px;background:#a6a6a6;"></div>
<div class="a" style="left:298.00px;top:448.00px;width:28.00px;height:11.00px;background:#a6a6a6;"></div>
<div class="a" style="left:327.00px;top:448.00px;width:29.00px;height:11.00px;background:#a6a6a6;"></div>
<div class="a" style="left:357.00px;top:448.00px;width:28.00px;height:11.00px;background:#a6a6a6;"></div>
<div class="a" style="left:386.00px;top:448.00px;width:28.00px;height:11.00px;background:#a6a6a6;"></div>
<div class="a" style="left:415.00px;top:448.00px;width:29.00px;height:11.00px;background:#a6a6a6;"></div>
<div class="a" style="left:445.00px;top:448.00px;width:28.00px;height:11.00px;background:#a6a6a6;"></div>
<div class="a" style="left:474.00px;top:448.00px;width:29.00px;height:11.00px;background:#a6a6a6;"></div>
<div class="a" style="left:504.00px;top:448.00px;width:28.00px;height:11.00px;background:#a6a6a6;"></div>
<div class="a" style="left:533.00px;top:448.00px;width:29.00px;height:11.00px;background:#a6a6a6;"></div>
<div class="a" style="left:563.00px;top:448.00px;width:28.00px;height:11.00px;background:#a6a6a6;"></div>
<div class="a" style="left:592.00px;top:448.00px;width:28.00px;height:11.00px;background:#a6a6a6;"></div>
<div class="a" style="left:621.00px;top:448.00px;width:29.00px;height:11.00px;background:#a6a6a6;"></div>
<div class="a" style="left:651.00px;top:448.00px;width:28.00px;height:11.00px;background:#a6a6a6;"></div>
<div class="a" style="left:680.00px;top:448.00px;width:28.00px;height:11.00px;background:#a6a6a6;"></div>
<div class="a" style="left:709.00px;top:448.00px;width:29.00px;height:11.00px;background:#a6a6a6;"></div>
<div class="a" style="left:739.00px;top:448.00px;width:28.00px;height:11.00px;background:#a6a6a6;"></div>
<div class="a" style="left:768.00px;top:448.00px;width:29.00px;height:11.00px;background:#a6a6a6;"></div>
<div class="a" style="left:798.00px;top:448.00px;width:28.00px;height:11.00px;background:#a6a6a6;"></div>
<div class="a" style="left:827.00px;top:448.00px;width:29.00px;height:11.00px;background:#a6a6a6;"></div>
<div class="a" style="left:857.00px;top:448.00px;width:28.00px;height:11.00px;background:#a6a6a6;"></div>
<div class="a" style="left:886.00px;top:448.00px;width:28.00px;height:11.00px;background:#a6a6a6;"></div>
<div class="a" style="left:915.00px;top:448.00px;width:29.00px;height:11.00px;background:#a6a6a6;"></div>
<div class="a" style="left:945.00px;top:448.00px;width:28.00px;height:11.00px;background:#a6a6a6;"></div>
<div class="a" style="left:974.00px;top:448.00px;width:28.00px;height:11.00px;background:#a6a6a6;"></div>
<div class="a" style="left:1003.00px;top:448.00px;width:37.00px;height:11.00px;background:#a6a6a6;"></div>
<div class="a" style="left:36.00px;top:460.00px;width:36.00px;height:10.00px;background:#e7dedd;"></div>
<div class="a" style="left:73.00px;top:460.00px;width:39.00px;height:10.00px;background:#e7dedd;"></div>
<div class="t s" style="left:-169.50px;width:600px;text-align:center;top:458.42px;height:13.30px;line-height:13.30px;font-size:6.65px;color:#d0d0d0;font-weight:normal;font-style:normal;">Ok</div>
<div class="a" style="left:154.00px;top:460.00px;width:25.00px;height:10.00px;background:#a7a3a3;"></div>
<div class="a" style="left:180.00px;top:460.00px;width:29.00px;height:10.00px;background:#a6a6a6;"></div>
<div class="a" style="left:210.00px;top:460.00px;width:28.00px;height:10.00px;background:#a6a6a6;"></div>
<div class="a" style="left:239.00px;top:460.00px;width:29.00px;height:10.00px;background:#a6a6a6;"></div>
<div class="a" style="left:269.00px;top:460.00px;width:28.00px;height:10.00px;background:#a6a6a6;"></div>
<div class="a" style="left:298.00px;top:460.00px;width:28.00px;height:10.00px;background:#a6a6a6;"></div>
<div class="a" style="left:327.00px;top:460.00px;width:29.00px;height:10.00px;background:#a6a6a6;"></div>
<div class="a" style="left:357.00px;top:460.00px;width:28.00px;height:10.00px;background:#a6a6a6;"></div>
<div class="a" style="left:386.00px;top:460.00px;width:28.00px;height:10.00px;background:#a6a6a6;"></div>
<div class="a" style="left:415.00px;top:460.00px;width:29.00px;height:10.00px;background:#a6a6a6;"></div>
<div class="a" style="left:445.00px;top:460.00px;width:28.00px;height:10.00px;background:#a6a6a6;"></div>
<div class="a" style="left:474.00px;top:460.00px;width:29.00px;height:10.00px;background:#a6a6a6;"></div>
<div class="a" style="left:504.00px;top:460.00px;width:28.00px;height:10.00px;background:#a6a6a6;"></div>
<div class="a" style="left:533.00px;top:460.00px;width:29.00px;height:10.00px;background:#a6a6a6;"></div>
<div class="a" style="left:563.00px;top:460.00px;width:28.00px;height:10.00px;background:#a6a6a6;"></div>
<div class="a" style="left:592.00px;top:460.00px;width:28.00px;height:10.00px;background:#a6a6a6;"></div>
<div class="a" style="left:621.00px;top:460.00px;width:29.00px;height:10.00px;background:#a6a6a6;"></div>
<div class="a" style="left:651.00px;top:460.00px;width:28.00px;height:10.00px;background:#a6a6a6;"></div>
<div class="a" style="left:680.00px;top:460.00px;width:28.00px;height:10.00px;background:#a6a6a6;"></div>
<div class="a" style="left:709.00px;top:460.00px;width:29.00px;height:10.00px;background:#a6a6a6;"></div>
<div class="a" style="left:739.00px;top:460.00px;width:28.00px;height:10.00px;background:#a6a6a6;"></div>
<div class="a" style="left:768.00px;top:460.00px;width:29.00px;height:10.00px;background:#a6a6a6;"></div>
<div class="a" style="left:798.00px;top:460.00px;width:28.00px;height:10.00px;background:#a6a6a6;"></div>
<div class="a" style="left:827.00px;top:460.00px;width:29.00px;height:10.00px;background:#a6a6a6;"></div>
<div class="a" style="left:857.00px;top:460.00px;width:28.00px;height:10.00px;background:#a6a6a6;"></div>
<div class="a" style="left:886.00px;top:460.00px;width:28.00px;height:10.00px;background:#a6a6a6;"></div>
<div class="a" style="left:915.00px;top:460.00px;width:29.00px;height:10.00px;background:#a6a6a6;"></div>
<div class="a" style="left:945.00px;top:460.00px;width:28.00px;height:10.00px;background:#a6a6a6;"></div>
<div class="a" style="left:974.00px;top:460.00px;width:28.00px;height:10.00px;background:#a6a6a6;"></div>
<div class="a" style="left:1003.00px;top:460.00px;width:37.00px;height:10.00px;background:#a6a6a6;"></div>
<div class="a" style="left:36.00px;top:471.00px;width:36.00px;height:10.00px;background:#e7dedd;"></div>
<div class="a" style="left:73.00px;top:471.00px;width:39.00px;height:10.00px;background:#e7dedd;"></div>
<div class="t s" style="left:-169.50px;width:600px;text-align:center;top:469.42px;height:13.30px;line-height:13.30px;font-size:6.65px;color:#d0d0d0;font-weight:normal;font-style:normal;">Ok</div>
<div class="a" style="left:154.00px;top:471.00px;width:25.00px;height:10.00px;background:#a7a3a3;"></div>
<div class="a" style="left:180.00px;top:471.00px;width:29.00px;height:10.00px;background:#a6a6a6;"></div>
<div class="a" style="left:210.00px;top:471.00px;width:28.00px;height:10.00px;background:#a6a6a6;"></div>
<div class="a" style="left:239.00px;top:471.00px;width:29.00px;height:10.00px;background:#a6a6a6;"></div>
<div class="a" style="left:269.00px;top:471.00px;width:28.00px;height:10.00px;background:#a6a6a6;"></div>
<div class="a" style="left:298.00px;top:471.00px;width:28.00px;height:10.00px;background:#a6a6a6;"></div>
<div class="a" style="left:327.00px;top:471.00px;width:29.00px;height:10.00px;background:#a6a6a6;"></div>
<div class="a" style="left:357.00px;top:471.00px;width:28.00px;height:10.00px;background:#a6a6a6;"></div>
<div class="a" style="left:386.00px;top:471.00px;width:28.00px;height:10.00px;background:#a6a6a6;"></div>
<div class="a" style="left:415.00px;top:471.00px;width:29.00px;height:10.00px;background:#a6a6a6;"></div>
<div class="a" style="left:445.00px;top:471.00px;width:28.00px;height:10.00px;background:#a6a6a6;"></div>
<div class="a" style="left:474.00px;top:471.00px;width:29.00px;height:10.00px;background:#a6a6a6;"></div>
<div class="a" style="left:504.00px;top:471.00px;width:28.00px;height:10.00px;background:#a6a6a6;"></div>
<div class="a" style="left:533.00px;top:471.00px;width:29.00px;height:10.00px;background:#a6a6a6;"></div>
<div class="a" style="left:563.00px;top:471.00px;width:28.00px;height:10.00px;background:#a6a6a6;"></div>
<div class="a" style="left:592.00px;top:471.00px;width:28.00px;height:10.00px;background:#a6a6a6;"></div>
<div class="a" style="left:621.00px;top:471.00px;width:29.00px;height:10.00px;background:#a6a6a6;"></div>
<div class="a" style="left:651.00px;top:471.00px;width:28.00px;height:10.00px;background:#a6a6a6;"></div>
<div class="a" style="left:680.00px;top:471.00px;width:28.00px;height:10.00px;background:#a6a6a6;"></div>
<div class="a" style="left:709.00px;top:471.00px;width:29.00px;height:10.00px;background:#a6a6a6;"></div>
<div class="a" style="left:739.00px;top:471.00px;width:28.00px;height:10.00px;background:#a6a6a6;"></div>
<div class="a" style="left:768.00px;top:471.00px;width:29.00px;height:10.00px;background:#a6a6a6;"></div>
<div class="a" style="left:798.00px;top:471.00px;width:28.00px;height:10.00px;background:#a6a6a6;"></div>
<div class="a" style="left:827.00px;top:471.00px;width:29.00px;height:10.00px;background:#a6a6a6;"></div>
<div class="a" style="left:857.00px;top:471.00px;width:28.00px;height:10.00px;background:#a6a6a6;"></div>
<div class="a" style="left:886.00px;top:471.00px;width:28.00px;height:10.00px;background:#a6a6a6;"></div>
<div class="a" style="left:915.00px;top:471.00px;width:29.00px;height:10.00px;background:#a6a6a6;"></div>
<div class="a" style="left:945.00px;top:471.00px;width:28.00px;height:10.00px;background:#a6a6a6;"></div>
<div class="a" style="left:974.00px;top:471.00px;width:28.00px;height:10.00px;background:#a6a6a6;"></div>
<div class="a" style="left:1003.00px;top:471.00px;width:37.00px;height:10.00px;background:#a6a6a6;"></div>
<div class="a" style="left:36.00px;top:482.00px;width:36.00px;height:11.00px;background:#e7dedd;"></div>
<div class="a" style="left:73.00px;top:482.00px;width:39.00px;height:11.00px;background:#e7dedd;"></div>
<div class="t s" style="left:-169.50px;width:600px;text-align:center;top:480.92px;height:13.30px;line-height:13.30px;font-size:6.65px;color:#d0d0d0;font-weight:normal;font-style:normal;">Ok</div>
<div class="a" style="left:154.00px;top:482.00px;width:25.00px;height:11.00px;background:#a7a3a3;"></div>
<div class="a" style="left:180.00px;top:482.00px;width:29.00px;height:11.00px;background:#a6a6a6;"></div>
<div class="a" style="left:210.00px;top:482.00px;width:28.00px;height:11.00px;background:#a6a6a6;"></div>
<div class="a" style="left:239.00px;top:482.00px;width:29.00px;height:11.00px;background:#a6a6a6;"></div>
<div class="a" style="left:269.00px;top:482.00px;width:28.00px;height:11.00px;background:#a6a6a6;"></div>
<div class="a" style="left:298.00px;top:482.00px;width:28.00px;height:11.00px;background:#a6a6a6;"></div>
<div class="a" style="left:327.00px;top:482.00px;width:29.00px;height:11.00px;background:#a6a6a6;"></div>
<div class="a" style="left:357.00px;top:482.00px;width:28.00px;height:11.00px;background:#a6a6a6;"></div>
<div class="a" style="left:386.00px;top:482.00px;width:28.00px;height:11.00px;background:#a6a6a6;"></div>
<div class="a" style="left:415.00px;top:482.00px;width:29.00px;height:11.00px;background:#a6a6a6;"></div>
<div class="a" style="left:445.00px;top:482.00px;width:28.00px;height:11.00px;background:#a6a6a6;"></div>
<div class="a" style="left:474.00px;top:482.00px;width:29.00px;height:11.00px;background:#a6a6a6;"></div>
<div class="a" style="left:504.00px;top:482.00px;width:28.00px;height:11.00px;background:#a6a6a6;"></div>
<div class="a" style="left:533.00px;top:482.00px;width:29.00px;height:11.00px;background:#a6a6a6;"></div>
<div class="a" style="left:563.00px;top:482.00px;width:28.00px;height:11.00px;background:#a6a6a6;"></div>
<div class="a" style="left:592.00px;top:482.00px;width:28.00px;height:11.00px;background:#a6a6a6;"></div>
<div class="a" style="left:621.00px;top:482.00px;width:29.00px;height:11.00px;background:#a6a6a6;"></div>
<div class="a" style="left:651.00px;top:482.00px;width:28.00px;height:11.00px;background:#a6a6a6;"></div>
<div class="a" style="left:680.00px;top:482.00px;width:28.00px;height:11.00px;background:#a6a6a6;"></div>
<div class="a" style="left:709.00px;top:482.00px;width:29.00px;height:11.00px;background:#a6a6a6;"></div>
<div class="a" style="left:739.00px;top:482.00px;width:28.00px;height:11.00px;background:#a6a6a6;"></div>
<div class="a" style="left:768.00px;top:482.00px;width:29.00px;height:11.00px;background:#a6a6a6;"></div>
<div class="a" style="left:798.00px;top:482.00px;width:28.00px;height:11.00px;background:#a6a6a6;"></div>
<div class="a" style="left:827.00px;top:482.00px;width:29.00px;height:11.00px;background:#a6a6a6;"></div>
<div class="a" style="left:857.00px;top:482.00px;width:28.00px;height:11.00px;background:#a6a6a6;"></div>
<div class="a" style="left:886.00px;top:482.00px;width:28.00px;height:11.00px;background:#a6a6a6;"></div>
<div class="a" style="left:915.00px;top:482.00px;width:29.00px;height:11.00px;background:#a6a6a6;"></div>
<div class="a" style="left:945.00px;top:482.00px;width:28.00px;height:11.00px;background:#a6a6a6;"></div>
<div class="a" style="left:974.00px;top:482.00px;width:28.00px;height:11.00px;background:#a6a6a6;"></div>
<div class="a" style="left:1003.00px;top:482.00px;width:37.00px;height:11.00px;background:#a6a6a6;"></div>
<div class="a" style="left:36.00px;top:494.00px;width:36.00px;height:10.00px;background:#e7dedd;"></div>
<div class="a" style="left:73.00px;top:494.00px;width:39.00px;height:10.00px;background:#e7dedd;"></div>
<div class="t s" style="left:-169.50px;width:600px;text-align:center;top:492.42px;height:13.30px;line-height:13.30px;font-size:6.65px;color:#d0d0d0;font-weight:normal;font-style:normal;">Ok</div>
<div class="a" style="left:154.00px;top:494.00px;width:25.00px;height:10.00px;background:#a7a3a3;"></div>
<div class="a" style="left:180.00px;top:494.00px;width:29.00px;height:10.00px;background:#a6a6a6;"></div>
<div class="a" style="left:210.00px;top:494.00px;width:28.00px;height:10.00px;background:#a6a6a6;"></div>
<div class="a" style="left:239.00px;top:494.00px;width:29.00px;height:10.00px;background:#a6a6a6;"></div>
<div class="a" style="left:269.00px;top:494.00px;width:28.00px;height:10.00px;background:#a6a6a6;"></div>
<div class="a" style="left:298.00px;top:494.00px;width:28.00px;height:10.00px;background:#a6a6a6;"></div>
<div class="a" style="left:327.00px;top:494.00px;width:29.00px;height:10.00px;background:#a6a6a6;"></div>
<div class="a" style="left:357.00px;top:494.00px;width:28.00px;height:10.00px;background:#a6a6a6;"></div>
<div class="a" style="left:386.00px;top:494.00px;width:28.00px;height:10.00px;background:#a6a6a6;"></div>
<div class="a" style="left:415.00px;top:494.00px;width:29.00px;height:10.00px;background:#a6a6a6;"></div>
<div class="a" style="left:445.00px;top:494.00px;width:28.00px;height:10.00px;background:#a6a6a6;"></div>
<div class="a" style="left:474.00px;top:494.00px;width:29.00px;height:10.00px;background:#a6a6a6;"></div>
<div class="a" style="left:504.00px;top:494.00px;width:28.00px;height:10.00px;background:#a6a6a6;"></div>
<div class="a" style="left:533.00px;top:494.00px;width:29.00px;height:10.00px;background:#a6a6a6;"></div>
<div class="a" style="left:563.00px;top:494.00px;width:28.00px;height:10.00px;background:#a6a6a6;"></div>
<div class="a" style="left:592.00px;top:494.00px;width:28.00px;height:10.00px;background:#a6a6a6;"></div>
<div class="a" style="left:621.00px;top:494.00px;width:29.00px;height:10.00px;background:#a6a6a6;"></div>
<div class="a" style="left:651.00px;top:494.00px;width:28.00px;height:10.00px;background:#a6a6a6;"></div>
<div class="a" style="left:680.00px;top:494.00px;width:28.00px;height:10.00px;background:#a6a6a6;"></div>
<div class="a" style="left:709.00px;top:494.00px;width:29.00px;height:10.00px;background:#a6a6a6;"></div>
<div class="a" style="left:739.00px;top:494.00px;width:28.00px;height:10.00px;background:#a6a6a6;"></div>
<div class="a" style="left:768.00px;top:494.00px;width:29.00px;height:10.00px;background:#a6a6a6;"></div>
<div class="a" style="left:798.00px;top:494.00px;width:28.00px;height:10.00px;background:#a6a6a6;"></div>
<div class="a" style="left:827.00px;top:494.00px;width:29.00px;height:10.00px;background:#a6a6a6;"></div>
<div class="a" style="left:857.00px;top:494.00px;width:28.00px;height:10.00px;background:#a6a6a6;"></div>
<div class="a" style="left:886.00px;top:494.00px;width:28.00px;height:10.00px;background:#a6a6a6;"></div>
<div class="a" style="left:915.00px;top:494.00px;width:29.00px;height:10.00px;background:#a6a6a6;"></div>
<div class="a" style="left:945.00px;top:494.00px;width:28.00px;height:10.00px;background:#a6a6a6;"></div>
<div class="a" style="left:974.00px;top:494.00px;width:28.00px;height:10.00px;background:#a6a6a6;"></div>
<div class="a" style="left:1003.00px;top:494.00px;width:37.00px;height:10.00px;background:#a6a6a6;"></div>
<div class="a" style="left:36.00px;top:505.00px;width:36.00px;height:11.00px;background:#e7dedd;"></div>
<div class="a" style="left:73.00px;top:505.00px;width:39.00px;height:11.00px;background:#e7dedd;"></div>
<div class="t s" style="left:-169.50px;width:600px;text-align:center;top:503.92px;height:13.30px;line-height:13.30px;font-size:6.65px;color:#d0d0d0;font-weight:normal;font-style:normal;">Ok</div>
<div class="a" style="left:154.00px;top:505.00px;width:25.00px;height:11.00px;background:#a7a3a3;"></div>
<div class="a" style="left:180.00px;top:505.00px;width:29.00px;height:11.00px;background:#a6a6a6;"></div>
<div class="a" style="left:210.00px;top:505.00px;width:28.00px;height:11.00px;background:#a6a6a6;"></div>
<div class="a" style="left:239.00px;top:505.00px;width:29.00px;height:11.00px;background:#a6a6a6;"></div>
<div class="a" style="left:269.00px;top:505.00px;width:28.00px;height:11.00px;background:#a6a6a6;"></div>
<div class="a" style="left:298.00px;top:505.00px;width:28.00px;height:11.00px;background:#a6a6a6;"></div>
<div class="a" style="left:327.00px;top:505.00px;width:29.00px;height:11.00px;background:#a6a6a6;"></div>
<div class="a" style="left:357.00px;top:505.00px;width:28.00px;height:11.00px;background:#a6a6a6;"></div>
<div class="a" style="left:386.00px;top:505.00px;width:28.00px;height:11.00px;background:#a6a6a6;"></div>
<div class="a" style="left:415.00px;top:505.00px;width:29.00px;height:11.00px;background:#a6a6a6;"></div>
<div class="a" style="left:445.00px;top:505.00px;width:28.00px;height:11.00px;background:#a6a6a6;"></div>
<div class="a" style="left:474.00px;top:505.00px;width:29.00px;height:11.00px;background:#a6a6a6;"></div>
<div class="a" style="left:504.00px;top:505.00px;width:28.00px;height:11.00px;background:#a6a6a6;"></div>
<div class="a" style="left:533.00px;top:505.00px;width:29.00px;height:11.00px;background:#a6a6a6;"></div>
<div class="a" style="left:563.00px;top:505.00px;width:28.00px;height:11.00px;background:#a6a6a6;"></div>
<div class="a" style="left:592.00px;top:505.00px;width:28.00px;height:11.00px;background:#a6a6a6;"></div>
<div class="a" style="left:621.00px;top:505.00px;width:29.00px;height:11.00px;background:#a6a6a6;"></div>
<div class="a" style="left:651.00px;top:505.00px;width:28.00px;height:11.00px;background:#a6a6a6;"></div>
<div class="a" style="left:680.00px;top:505.00px;width:28.00px;height:11.00px;background:#a6a6a6;"></div>
<div class="a" style="left:709.00px;top:505.00px;width:29.00px;height:11.00px;background:#a6a6a6;"></div>
<div class="a" style="left:739.00px;top:505.00px;width:28.00px;height:11.00px;background:#a6a6a6;"></div>
<div class="a" style="left:768.00px;top:505.00px;width:29.00px;height:11.00px;background:#a6a6a6;"></div>
<div class="a" style="left:798.00px;top:505.00px;width:28.00px;height:11.00px;background:#a6a6a6;"></div>
<div class="a" style="left:827.00px;top:505.00px;width:29.00px;height:11.00px;background:#a6a6a6;"></div>
<div class="a" style="left:857.00px;top:505.00px;width:28.00px;height:11.00px;background:#a6a6a6;"></div>
<div class="a" style="left:886.00px;top:505.00px;width:28.00px;height:11.00px;background:#a6a6a6;"></div>
<div class="a" style="left:915.00px;top:505.00px;width:29.00px;height:11.00px;background:#a6a6a6;"></div>
<div class="a" style="left:945.00px;top:505.00px;width:28.00px;height:11.00px;background:#a6a6a6;"></div>
<div class="a" style="left:974.00px;top:505.00px;width:28.00px;height:11.00px;background:#a6a6a6;"></div>
<div class="a" style="left:1003.00px;top:505.00px;width:37.00px;height:11.00px;background:#a6a6a6;"></div>
<div class="a" style="left:36.00px;top:517.00px;width:36.00px;height:10.00px;background:#e7dedd;"></div>
<div class="a" style="left:73.00px;top:517.00px;width:39.00px;height:10.00px;background:#e7dedd;"></div>
<div class="t s" style="left:-169.50px;width:600px;text-align:center;top:515.42px;height:13.30px;line-height:13.30px;font-size:6.65px;color:#d0d0d0;font-weight:normal;font-style:normal;">Ok</div>
<div class="a" style="left:154.00px;top:517.00px;width:25.00px;height:10.00px;background:#a7a3a3;"></div>
<div class="a" style="left:180.00px;top:517.00px;width:29.00px;height:10.00px;background:#a6a6a6;"></div>
<div class="a" style="left:210.00px;top:517.00px;width:28.00px;height:10.00px;background:#a6a6a6;"></div>
<div class="a" style="left:239.00px;top:517.00px;width:29.00px;height:10.00px;background:#a6a6a6;"></div>
<div class="a" style="left:269.00px;top:517.00px;width:28.00px;height:10.00px;background:#a6a6a6;"></div>
<div class="a" style="left:298.00px;top:517.00px;width:28.00px;height:10.00px;background:#a6a6a6;"></div>
<div class="a" style="left:327.00px;top:517.00px;width:29.00px;height:10.00px;background:#a6a6a6;"></div>
<div class="a" style="left:357.00px;top:517.00px;width:28.00px;height:10.00px;background:#a6a6a6;"></div>
<div class="a" style="left:386.00px;top:517.00px;width:28.00px;height:10.00px;background:#a6a6a6;"></div>
<div class="a" style="left:415.00px;top:517.00px;width:29.00px;height:10.00px;background:#a6a6a6;"></div>
<div class="a" style="left:445.00px;top:517.00px;width:28.00px;height:10.00px;background:#a6a6a6;"></div>
<div class="a" style="left:474.00px;top:517.00px;width:29.00px;height:10.00px;background:#a6a6a6;"></div>
<div class="a" style="left:504.00px;top:517.00px;width:28.00px;height:10.00px;background:#a6a6a6;"></div>
<div class="a" style="left:533.00px;top:517.00px;width:29.00px;height:10.00px;background:#a6a6a6;"></div>
<div class="a" style="left:563.00px;top:517.00px;width:28.00px;height:10.00px;background:#a6a6a6;"></div>
<div class="a" style="left:592.00px;top:517.00px;width:28.00px;height:10.00px;background:#a6a6a6;"></div>
<div class="a" style="left:621.00px;top:517.00px;width:29.00px;height:10.00px;background:#a6a6a6;"></div>
<div class="a" style="left:651.00px;top:517.00px;width:28.00px;height:10.00px;background:#a6a6a6;"></div>
<div class="a" style="left:680.00px;top:517.00px;width:28.00px;height:10.00px;background:#a6a6a6;"></div>
<div class="a" style="left:709.00px;top:517.00px;width:29.00px;height:10.00px;background:#a6a6a6;"></div>
<div class="a" style="left:739.00px;top:517.00px;width:28.00px;height:10.00px;background:#a6a6a6;"></div>
<div class="a" style="left:768.00px;top:517.00px;width:29.00px;height:10.00px;background:#a6a6a6;"></div>
<div class="a" style="left:798.00px;top:517.00px;width:28.00px;height:10.00px;background:#a6a6a6;"></div>
<div class="a" style="left:827.00px;top:517.00px;width:29.00px;height:10.00px;background:#a6a6a6;"></div>
<div class="a" style="left:857.00px;top:517.00px;width:28.00px;height:10.00px;background:#a6a6a6;"></div>
<div class="a" style="left:886.00px;top:517.00px;width:28.00px;height:10.00px;background:#a6a6a6;"></div>
<div class="a" style="left:915.00px;top:517.00px;width:29.00px;height:10.00px;background:#a6a6a6;"></div>
<div class="a" style="left:945.00px;top:517.00px;width:28.00px;height:10.00px;background:#a6a6a6;"></div>
<div class="a" style="left:974.00px;top:517.00px;width:28.00px;height:10.00px;background:#a6a6a6;"></div>
<div class="a" style="left:1003.00px;top:517.00px;width:37.00px;height:10.00px;background:#a6a6a6;"></div>
<div class="a" style="left:36.00px;top:528.00px;width:36.00px;height:10.00px;background:#e7dedd;"></div>
<div class="a" style="left:73.00px;top:528.00px;width:39.00px;height:10.00px;background:#e7dedd;"></div>
<div class="t s" style="left:-169.50px;width:600px;text-align:center;top:526.42px;height:13.30px;line-height:13.30px;font-size:6.65px;color:#d0d0d0;font-weight:normal;font-style:normal;">Ok</div>
<div class="a" style="left:154.00px;top:528.00px;width:25.00px;height:10.00px;background:#a7a3a3;"></div>
<div class="a" style="left:180.00px;top:528.00px;width:29.00px;height:10.00px;background:#a6a6a6;"></div>
<div class="a" style="left:210.00px;top:528.00px;width:28.00px;height:10.00px;background:#a6a6a6;"></div>
<div class="a" style="left:239.00px;top:528.00px;width:29.00px;height:10.00px;background:#a6a6a6;"></div>
<div class="a" style="left:269.00px;top:528.00px;width:28.00px;height:10.00px;background:#a6a6a6;"></div>
<div class="a" style="left:298.00px;top:528.00px;width:28.00px;height:10.00px;background:#a6a6a6;"></div>
<div class="a" style="left:327.00px;top:528.00px;width:29.00px;height:10.00px;background:#a6a6a6;"></div>
<div class="a" style="left:357.00px;top:528.00px;width:28.00px;height:10.00px;background:#a6a6a6;"></div>
<div class="a" style="left:386.00px;top:528.00px;width:28.00px;height:10.00px;background:#a6a6a6;"></div>
<div class="a" style="left:415.00px;top:528.00px;width:29.00px;height:10.00px;background:#a6a6a6;"></div>
<div class="a" style="left:445.00px;top:528.00px;width:28.00px;height:10.00px;background:#a6a6a6;"></div>
<div class="a" style="left:474.00px;top:528.00px;width:29.00px;height:10.00px;background:#a6a6a6;"></div>
<div class="a" style="left:504.00px;top:528.00px;width:28.00px;height:10.00px;background:#a6a6a6;"></div>
<div class="a" style="left:533.00px;top:528.00px;width:29.00px;height:10.00px;background:#a6a6a6;"></div>
<div class="a" style="left:563.00px;top:528.00px;width:28.00px;height:10.00px;background:#a6a6a6;"></div>
<div class="a" style="left:592.00px;top:528.00px;width:28.00px;height:10.00px;background:#a6a6a6;"></div>
<div class="a" style="left:621.00px;top:528.00px;width:29.00px;height:10.00px;background:#a6a6a6;"></div>
<div class="a" style="left:651.00px;top:528.00px;width:28.00px;height:10.00px;background:#a6a6a6;"></div>
<div class="a" style="left:680.00px;top:528.00px;width:28.00px;height:10.00px;background:#a6a6a6;"></div>
<div class="a" style="left:709.00px;top:528.00px;width:29.00px;height:10.00px;background:#a6a6a6;"></div>
<div class="a" style="left:739.00px;top:528.00px;width:28.00px;height:10.00px;background:#a6a6a6;"></div>
<div class="a" style="left:768.00px;top:528.00px;width:29.00px;height:10.00px;background:#a6a6a6;"></div>
<div class="a" style="left:798.00px;top:528.00px;width:28.00px;height:10.00px;background:#a6a6a6;"></div>
<div class="a" style="left:827.00px;top:528.00px;width:29.00px;height:10.00px;background:#a6a6a6;"></div>
<div class="a" style="left:857.00px;top:528.00px;width:28.00px;height:10.00px;background:#a6a6a6;"></div>
<div class="a" style="left:886.00px;top:528.00px;width:28.00px;height:10.00px;background:#a6a6a6;"></div>
<div class="a" style="left:915.00px;top:528.00px;width:29.00px;height:10.00px;background:#a6a6a6;"></div>
<div class="a" style="left:945.00px;top:528.00px;width:28.00px;height:10.00px;background:#a6a6a6;"></div>
<div class="a" style="left:974.00px;top:528.00px;width:28.00px;height:10.00px;background:#a6a6a6;"></div>
<div class="a" style="left:1003.00px;top:528.00px;width:37.00px;height:10.00px;background:#a6a6a6;"></div>
<div class="t s" style="left:-246.00px;width:600px;text-align:center;top:387.58px;height:17.00px;line-height:17.00px;font-size:8.5px;color:#1a1a1a;font-weight:bold;font-style:normal;">4</div>
<div class="t s" style="left:-208.00px;width:600px;text-align:center;top:387.58px;height:17.00px;line-height:17.00px;font-size:8.5px;color:#1a1a1a;font-weight:normal;font-style:normal;">1085</div>
<div class="t s" style="left:-246.00px;width:600px;text-align:center;top:399.08px;height:17.00px;line-height:17.00px;font-size:8.5px;color:#1a1a1a;font-weight:bold;font-style:normal;">3</div>
<div class="t s" style="left:-208.00px;width:600px;text-align:center;top:399.08px;height:17.00px;line-height:17.00px;font-size:8.5px;color:#1a1a1a;font-weight:normal;font-style:normal;">450</div>
<div class="t s" style="left:-246.00px;width:600px;text-align:center;top:410.58px;height:17.00px;line-height:17.00px;font-size:8.5px;color:#1a1a1a;font-weight:bold;font-style:normal;">10</div>
<div class="t s" style="left:-208.00px;width:600px;text-align:center;top:410.58px;height:17.00px;line-height:17.00px;font-size:8.5px;color:#1a1a1a;font-weight:normal;font-style:normal;">150</div>
<div class="t s" style="left:-133.00px;width:600px;text-align:center;top:387.58px;height:17.00px;line-height:17.00px;font-size:8.5px;color:#f8f8f8;font-weight:normal;font-style:normal;">1</div>
<div class="a" style="left:180.00px;top:391.00px;width:29.00px;height:10.00px;background:#c9a194;"></div>
<div class="t s" style="left:-105.50px;width:600px;text-align:center;top:389.24px;height:13.66px;line-height:13.66px;font-size:6.83px;color:#3a3030;font-weight:normal;font-style:normal;">1085</div>
<div class="a" style="left:210.00px;top:391.00px;width:28.00px;height:10.00px;background:#c9a194;"></div>
<div class="t s" style="left:-76.00px;width:600px;text-align:center;top:389.24px;height:13.66px;line-height:13.66px;font-size:6.83px;color:#3a3030;font-weight:normal;font-style:normal;">1085</div>
<div class="a" style="left:239.00px;top:391.00px;width:29.00px;height:10.00px;background:#c9a194;"></div>
<div class="t s" style="left:-46.50px;width:600px;text-align:center;top:389.24px;height:13.66px;line-height:13.66px;font-size:6.83px;color:#3a3030;font-weight:normal;font-style:normal;">1085</div>
<div class="a" style="left:269.00px;top:391.00px;width:28.00px;height:10.00px;background:#c9a194;"></div>
<div class="t s" style="left:-17.00px;width:600px;text-align:center;top:389.24px;height:13.66px;line-height:13.66px;font-size:6.83px;color:#3a3030;font-weight:normal;font-style:normal;">450</div>
<div class="a" style="left:298.00px;top:391.00px;width:28.00px;height:10.00px;background:#c9a194;"></div>
<div class="t s" style="left:12.00px;width:600px;text-align:center;top:389.24px;height:13.66px;line-height:13.66px;font-size:6.83px;color:#3a3030;font-weight:normal;font-style:normal;">450</div>
<div class="a" style="left:1003.00px;top:391.00px;width:37.00px;height:10.00px;background:#c4a4a6;"></div>
<div class="t s" style="left:-133.00px;width:600px;text-align:center;top:399.08px;height:17.00px;line-height:17.00px;font-size:8.5px;color:#f8f8f8;font-weight:normal;font-style:normal;">2</div>
<div class="a" style="left:180.00px;top:402.00px;width:29.00px;height:11.00px;background:#c9a194;"></div>
<div class="t s" style="left:-105.50px;width:600px;text-align:center;top:400.74px;height:13.66px;line-height:13.66px;font-size:6.83px;color:#3a3030;font-weight:normal;font-style:normal;">1085</div>
<div class="a" style="left:210.00px;top:402.00px;width:28.00px;height:11.00px;background:#c9a194;"></div>
<div class="t s" style="left:-76.00px;width:600px;text-align:center;top:400.74px;height:13.66px;line-height:13.66px;font-size:6.83px;color:#3a3030;font-weight:normal;font-style:normal;">450</div>
<div class="a" style="left:239.00px;top:402.00px;width:29.00px;height:11.00px;background:#c9a194;"></div>
<div class="t s" style="left:-46.50px;width:600px;text-align:center;top:400.74px;height:13.66px;line-height:13.66px;font-size:6.83px;color:#3a3030;font-weight:normal;font-style:normal;">150</div>
<div class="a" style="left:269.00px;top:402.00px;width:28.00px;height:11.00px;background:#c9a194;"></div>
<div class="t s" style="left:-17.00px;width:600px;text-align:center;top:400.74px;height:13.66px;line-height:13.66px;font-size:6.83px;color:#3a3030;font-weight:normal;font-style:normal;">150</div>
<div class="a" style="left:298.00px;top:402.00px;width:28.00px;height:11.00px;background:#c9a194;"></div>
<div class="t s" style="left:12.00px;width:600px;text-align:center;top:400.74px;height:13.66px;line-height:13.66px;font-size:6.83px;color:#3a3030;font-weight:normal;font-style:normal;">150</div>
<div class="a" style="left:327.00px;top:402.00px;width:29.00px;height:11.00px;background:#c9a194;"></div>
<div class="t s" style="left:41.50px;width:600px;text-align:center;top:400.74px;height:13.66px;line-height:13.66px;font-size:6.83px;color:#3a3030;font-weight:normal;font-style:normal;">150</div>
<div class="a" style="left:357.00px;top:402.00px;width:28.00px;height:11.00px;background:#c9a194;"></div>
<div class="t s" style="left:71.00px;width:600px;text-align:center;top:400.74px;height:13.66px;line-height:13.66px;font-size:6.83px;color:#3a3030;font-weight:normal;font-style:normal;">150</div>
<div class="a" style="left:386.00px;top:402.00px;width:28.00px;height:11.00px;background:#c9a194;"></div>
<div class="t s" style="left:100.00px;width:600px;text-align:center;top:400.74px;height:13.66px;line-height:13.66px;font-size:6.83px;color:#3a3030;font-weight:normal;font-style:normal;">150</div>
<div class="a" style="left:415.00px;top:402.00px;width:29.00px;height:11.00px;background:#c9a194;"></div>
<div class="t s" style="left:129.50px;width:600px;text-align:center;top:400.74px;height:13.66px;line-height:13.66px;font-size:6.83px;color:#3a3030;font-weight:normal;font-style:normal;">150</div>
<div class="a" style="left:445.00px;top:402.00px;width:28.00px;height:11.00px;background:#c9a194;"></div>
<div class="t s" style="left:159.00px;width:600px;text-align:center;top:400.74px;height:13.66px;line-height:13.66px;font-size:6.83px;color:#3a3030;font-weight:normal;font-style:normal;">150</div>
<div class="a" style="left:474.00px;top:402.00px;width:29.00px;height:11.00px;background:#c9a194;"></div>
<div class="t s" style="left:188.50px;width:600px;text-align:center;top:400.74px;height:13.66px;line-height:13.66px;font-size:6.83px;color:#3a3030;font-weight:normal;font-style:normal;">150</div>
<div class="a" style="left:504.00px;top:402.00px;width:28.00px;height:11.00px;background:#c9a194;"></div>
<div class="t s" style="left:218.00px;width:600px;text-align:center;top:400.74px;height:13.66px;line-height:13.66px;font-size:6.83px;color:#3a3030;font-weight:normal;font-style:normal;">150</div>
<div class="a" style="left:1003.00px;top:402.00px;width:37.00px;height:11.00px;background:#c4a4a6;"></div>
<div class="t s" style="left:721.00px;width:600px;text-align:center;top:387.58px;height:17.00px;line-height:17.00px;font-size:8.5px;color:#fafafa;font-weight:normal;font-style:normal;">45</div>
<div class="t s" style="left:721.00px;width:600px;text-align:center;top:399.08px;height:17.00px;line-height:17.00px;font-size:8.5px;color:#fafafa;font-weight:normal;font-style:normal;">1165</div>
<div class="a" style="left:0.00px;top:531.00px;width:1080.00px;height:20.00px;background:#f0f0f0;"></div>
<svg class="a" style="left:14px;top:537px" width="30" height="9" viewBox="0 0 30 9"><path d="M4.5 0.5 L1 4.5 L4.5 8.5" fill="none" stroke="#aaa" stroke-width="0.9"/><path d="M24 0.5 L27.5 4.5 L24 8.5" fill="none" stroke="#aaa" stroke-width="0.9"/></svg>
<div class="a" style="left:72.00px;top:531.00px;width:63.00px;height:19.00px;background:#fafafa;border-radius:0 0 3px 3px"></div>
<div class="t" style="left:-196.00px;width:600px;text-align:center;top:532.49px;height:17.20px;line-height:17.20px;font-size:8.6px;color:#222;font-weight:bold;font-style:normal;transform:scaleY(1.12);">Cut List Tool</div>
<div class="a" style="left:78.00px;top:546.00px;width:52.00px;height:1.00px;background:#3f8a5f;border-radius:1px"></div>
<div class="a" style="left:138.00px;top:534.00px;width:2.00px;height:14.00px;background:#dcdcdc;"></div>
<div class="t" style="left:-144.00px;width:600px;text-align:center;top:533.79px;height:17.20px;line-height:17.20px;font-size:8.6px;color:#333;font-weight:normal;font-style:normal;transform:scaleY(1.12);">Data</div>
<div class="a" style="left:174.00px;top:534.00px;width:0.00px;height:14.00px;background:#dcdcdc;"></div>
<svg class="a" style="left:200px;top:536px" width="10" height="10" viewBox="0 0 10 10"><path d="M5 0.5 V9.5 M0.5 5 H9.5" stroke="#555" stroke-width="1"/></svg>
<div class="a" style="left:650.5px;top:538px;width:1px;height:1px;background:#999;box-shadow:0 3px 0 #999,0 6px 0 #999"></div>
<svg class="a" style="left:665px;top:538px" width="6" height="7" viewBox="0 0 6 7"><path d="M5 0.5 L0.8 3.5 L5 6.5 Z" fill="#555"/></svg>
<div class="a" style="left:672.00px;top:539.00px;width:136.00px;height:5.00px;background:#8a8a8a;border-radius:3px"></div>
<svg class="a" style="left:1061px;top:538px" width="6" height="7" viewBox="0 0 6 7"><path d="M1 0.5 L5.2 3.5 L1 6.5 Z" fill="#555"/></svg>
<div class="a" style="left:0.00px;top:551.00px;width:1080.00px;height:15.00px;background:#f3f3f3;"></div>
<div class="t" style="left:4.20px;top:552.87px;height:13.00px;line-height:13.00px;font-size:6.5px;color:#333;font-weight:normal;font-style:normal;transform:scaleY(1.12);">Ready</div>
<svg class="a" style="left:35px;top:553px" width="11" height="12" viewBox="0 0 11 12"><circle cx="4.5" cy="1.8" r="1.2" fill="none" stroke="#444" stroke-width="0.8"/><path d="M0.8 4 Q4.5 5 8.5 3.5 M4.5 4.5 V7.5 L2.5 11 M4.5 7.5 L5 8.5" fill="none" stroke="#444" stroke-width="0.8"/><path d="M6.5 7.5 L10 11 M10 7.5 L6.5 11" stroke="#444" stroke-width="0.8"/></svg>
<div class="t" style="left:47.00px;top:552.52px;height:13.70px;line-height:13.70px;font-size:6.85px;color:#333;font-weight:normal;font-style:normal;transform:scaleY(1.12);">Accessibility: Investigate</div>
<div class="a" style="left:879.00px;top:552.00px;width:26.00px;height:14.00px;background:#e2e2e2;"></div>
<svg class="a" style="left:886px;top:554px" width="70" height="11" viewBox="0 0 70 11"><rect x="0.5" y="0.5" width="10" height="9" fill="none" stroke="#444" stroke-width="0.8"/><path d="M0.5 3.5 H10.5 M0.5 6.5 H10.5 M3.8 0.5 V9.5 M7.2 0.5 V9.5" stroke="#444" stroke-width="0.8"/><rect x="27.5" y="0.5" width="10" height="9" fill="none" stroke="#444" stroke-width="0.8"/><rect x="30" y="2.5" width="5" height="5" fill="none" stroke="#444" stroke-width="0.8"/><path d="M54 0.5 H63.5 V9.5 H54 Z M56.5 0.5 V5 H61 V0.5" fill="none" stroke="#444" stroke-width="0.8"/></svg>
<div class="a" style="left:962.00px;top:559.00px;width:5.00px;height:1.00px;background:#666;"></div>
<div class="a" style="left:970.00px;top:559.00px;width:65.00px;height:1.00px;background:#777;"></div>
<div class="a" style="left:1002.00px;top:555.00px;width:3.00px;height:9.00px;background:#555;border-radius:1px"></div>
<svg class="a" style="left:1038px;top:555px" width="8" height="8" viewBox="0 0 8 8"><path d="M4 0.5 V7.5 M0.5 4 H7.5" stroke="#666" stroke-width="0.8"/></svg>
<div class="t" style="left:469.00px;width:600px;text-align:right;top:552.67px;height:13.40px;line-height:13.40px;font-size:6.7px;color:#333;font-weight:normal;font-style:normal;transform:scaleY(1.12);">100%</div>
</body></html>
